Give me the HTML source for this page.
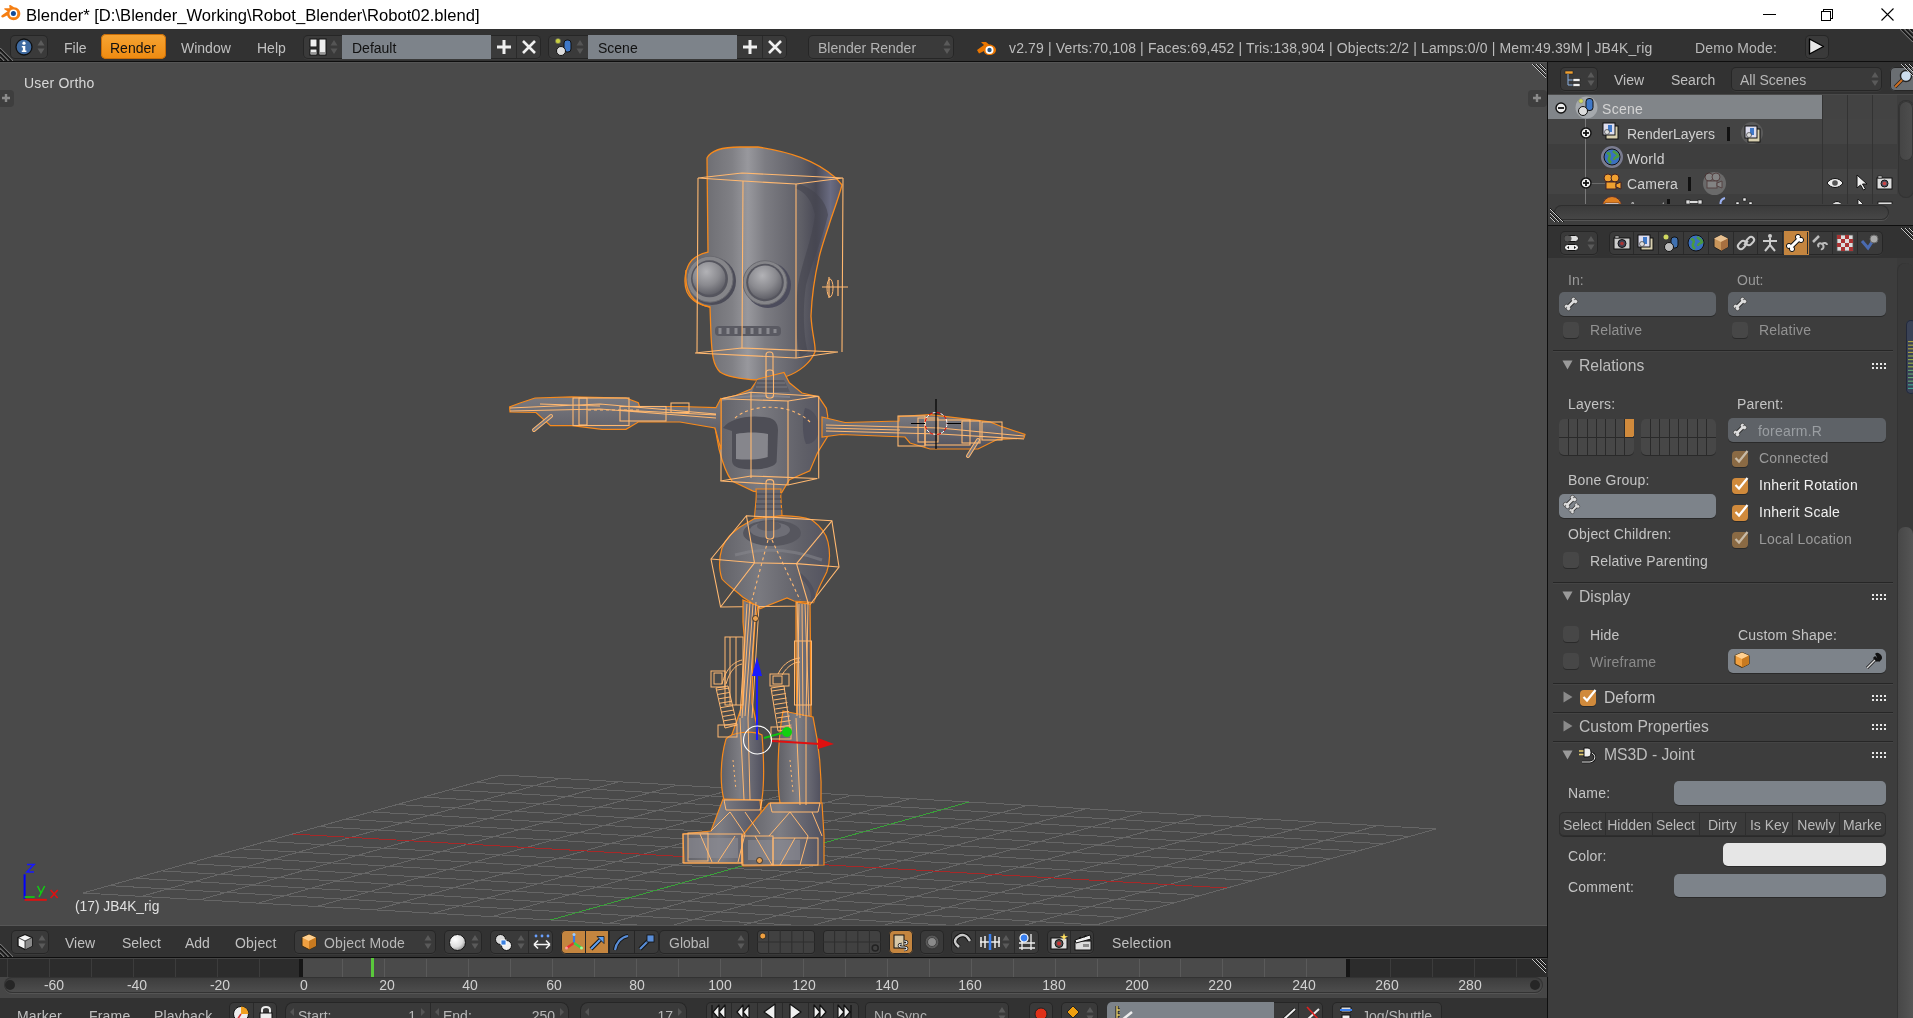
<!DOCTYPE html>
<html><head><meta charset="utf-8">
<style>
*{box-sizing:border-box;margin:0;padding:0}
html,body{width:1913px;height:1018px;overflow:hidden;background:#4a4a4a;font-family:"Liberation Sans",sans-serif;font-size:14px;color:#c8c8c8}
.a{position:absolute}
.t{position:absolute;white-space:nowrap;line-height:1;will-change:transform}
.hdr{position:absolute;background:#323232}
.box{position:absolute;background:#3a3a3a;border-radius:5px;box-shadow:inset 0 0 0 1px #2b2b2b,0 1px 0 #3c3c3c}
.fld{position:absolute;background:#7c8289;border-radius:4px}
.cb{position:absolute;width:16px;height:16px;border-radius:4px;background:#474747;box-shadow:0 1px 0 #2e2e2e}
.sep{position:absolute;height:1px;background:#232323;left:1553px;width:339px}
.grip{position:absolute;width:15px;height:7px;background-image:radial-gradient(circle at 1px 1px,#e6e6e6 1.1px,transparent 1.2px);background-size:4px 4px}
.arr{position:absolute;width:8px;height:16px}
svg{overflow:visible}
</style></head><body>

<div class="a" style="left:0;top:0;width:1913px;height:29px;background:#fff"></div>
<svg class="a" style="left:0;top:0" width="24" height="24" viewBox="0 0 24 24">
 <path d="M1.3 16.6 C1 16 1.5 15.4 2.2 14.9 L7.6 11.2 L4.6 9.6 C3.8 9 4.2 8.3 5.2 8.3 L9.6 8.3 L9.2 5.6 C9.2 4.8 10 4.7 10.8 5.2 L14 7.2 C17.8 7.4 20.3 10.2 20.3 13.5 C20.3 17.3 17.3 20.2 13.5 20.2 C10.3 20.2 7.8 18.2 7.1 15.6 L3 17.5 C2.2 17.8 1.6 17.3 1.3 16.6 Z" fill="#f57e12"/>
 <circle cx="13.4" cy="13.4" r="3.9" fill="#fff"/><circle cx="13.4" cy="13.4" r="2.5" fill="#124a9a"/>
</svg>
<div class="t" style="left:26px;top:7.5px;font-size:16.6px;color:#000">Blender* [D:\Blender_Working\Robot_Blender\Robot02.blend]</div>
<div class="a" style="left:1763px;top:14px;width:13px;height:1px;background:#000"></div>
<div class="a" style="left:1823px;top:9px;width:10px;height:10px;border:1px solid #000;background:#fff"></div>
<div class="a" style="left:1821px;top:11px;width:10px;height:10px;border:1px solid #000;background:#fff"></div>
<svg class="a" style="left:1881px;top:8px" width="13" height="13"><path d="M0.5 0.5L12.5 12.5M12.5 0.5L0.5 12.5" stroke="#000" stroke-width="1.1"/></svg>

<div class="a" style="left:0px;top:29px;width:1913px;height:32px;background:#323232;"></div>
<div class="a" style="left:0px;top:61px;width:1913px;height:1px;background:#0e0e0e;"></div>
<div class="a" style="left:10px;top:35px;width:38px;height:24px;background:#3a3a3a;border-radius:5px;box-shadow:inset 0 0 0 1px #262626,0 1px 0 rgba(255,255,255,0.04);"></div>
<svg class="a" style="left:15px;top:38px;" width="18" height="18" viewBox="0 0 18 18"><circle cx="9" cy="9" r="8" fill="#3f6aa0" stroke="#111" stroke-width="1.3"/><circle cx="9" cy="5.2" r="1.6" fill="#fff"/><path d="M6.8 8 H10.3 V12.6 H11.4 V14 H6.8 V12.6 H7.9 V9.4 H6.8Z" fill="#fff"/></svg>
<svg class="a" style="left:37px;top:39px;" width="8" height="16" viewBox="0 0 8 16"><path d="M0.5 6.5 L4 1 L7.5 6.5Z M0.5 9.5 L4 15 L7.5 9.5Z" fill="#5c5c5c"/></svg>
<div class="t" style="left:64px;top:41.15px;font-size:14px;color:#c0c0c0;">File</div>
<div class="a" style="left:101px;top:34px;width:65px;height:25px;border-radius:5px;background:linear-gradient(#f7a534,#ee8a10);box-shadow:inset 0 0 0 1px #c86d08"></div>
<div class="t" style="left:110px;top:41.15px;font-size:14px;color:#111;">Render</div>
<div class="t" style="left:181px;top:41.15px;font-size:14px;color:#c0c0c0;">Window</div>
<div class="t" style="left:256.5px;top:41.15px;font-size:14px;color:#c0c0c0;">Help</div>
<div class="a" style="left:303px;top:35px;width:238px;height:24px;background:#3a3a3a;border-radius:5px;box-shadow:inset 0 0 0 1px #262626,0 1px 0 rgba(255,255,255,0.04);"></div>
<div class="a" style="left:342px;top:35px;width:149px;height:24px;background:#7d838a;"></div>
<svg class="a" style="left:309px;top:38px;" width="18" height="18" viewBox="0 0 18 18"><rect x="1" y="1" width="7" height="8" fill="#eee" stroke="#111"/><rect x="1" y="11" width="7" height="6" fill="#eee" stroke="#111"/><rect x="10" y="1" width="7" height="16" fill="#eee" stroke="#111"/><rect x="2" y="14" width="5" height="2" fill="#999"/><rect x="11" y="14" width="5" height="2" fill="#999"/></svg>
<svg class="a" style="left:330px;top:39px;" width="8" height="16" viewBox="0 0 8 16"><path d="M0.5 6.5 L4 1 L7.5 6.5Z M0.5 9.5 L4 15 L7.5 9.5Z" fill="#555"/></svg>
<div class="t" style="left:351.5px;top:41.15px;font-size:14px;color:#111;">Default</div>
<div class="a" style="left:516px;top:36px;width:1px;height:22px;background:#2a2a2a;"></div>
<svg class="a" style="left:496px;top:39px;" width="16" height="16" viewBox="0 0 16 16"><path d="M8 1V15M1 8H15" stroke="#f0f0f0" stroke-width="3"/></svg>
<svg class="a" style="left:521px;top:39px;" width="16" height="16" viewBox="0 0 16 16"><path d="M2 2L14 14M14 2L2 14" stroke="#f0f0f0" stroke-width="2.6"/></svg>
<div class="a" style="left:548px;top:35px;width:239px;height:24px;background:#3a3a3a;border-radius:5px;box-shadow:inset 0 0 0 1px #262626,0 1px 0 rgba(255,255,255,0.04);"></div>
<div class="a" style="left:588px;top:35px;width:149px;height:24px;background:#7d838a;"></div>
<svg class="a" style="left:553px;top:37px;" width="22" height="20" viewBox="0 0 22 20"><circle cx="5" cy="4" r="2.6" fill="#c8d040" stroke="#665" stroke-width=".6"/><rect x="11" y="3" width="7" height="12" rx="3" fill="#3f78c8" stroke="#111" stroke-width="1"/><circle cx="8" cy="14" r="4.5" fill="#ddd" stroke="#111" stroke-width="1"/></svg>
<svg class="a" style="left:576px;top:39px;" width="8" height="16" viewBox="0 0 8 16"><path d="M0.5 6.5 L4 1 L7.5 6.5Z M0.5 9.5 L4 15 L7.5 9.5Z" fill="#555"/></svg>
<div class="t" style="left:597.5px;top:41.15px;font-size:14px;color:#111;">Scene</div>
<div class="a" style="left:762px;top:36px;width:1px;height:22px;background:#2a2a2a;"></div>
<svg class="a" style="left:742px;top:39px;" width="16" height="16" viewBox="0 0 16 16"><path d="M8 1V15M1 8H15" stroke="#f0f0f0" stroke-width="3"/></svg>
<svg class="a" style="left:767px;top:39px;" width="16" height="16" viewBox="0 0 16 16"><path d="M2 2L14 14M14 2L2 14" stroke="#f0f0f0" stroke-width="2.6"/></svg>
<div class="a" style="left:808px;top:35px;width:146px;height:24px;background:#3a3a3a;border-radius:5px;box-shadow:inset 0 0 0 1px #262626,0 1px 0 rgba(255,255,255,0.04);"></div>
<div class="t" style="left:817.5px;top:41.15px;font-size:14px;color:#b4b4b4;">Blender Render</div>
<svg class="a" style="left:943px;top:39px;" width="8" height="16" viewBox="0 0 8 16"><path d="M0.5 6.5 L4 1 L7.5 6.5Z M0.5 9.5 L4 15 L7.5 9.5Z" fill="#5a5a5a"/></svg>
<svg class="a" style="left:976px;top:37px;" width="22" height="20" viewBox="0 0 22 20"><path d="M1 13 L8 8 L5 5 L10 5 L13 7.5 C17 7.5 20 10 20 13 C20 16 17 18 13.5 18 C10 18 8 16 8 14 L3 16.5 Z" fill="#ea7600"/><circle cx="13.5" cy="13" r="4" fill="#fff"/><circle cx="13.5" cy="13" r="2.2" fill="#265787"/></svg>
<div class="t" style="left:1009px;top:41.15px;font-size:14px;color:#bdbdbd;letter-spacing:0.14px">v2.79 | Verts:70,108 | Faces:69,452 | Tris:138,904 | Objects:2/2 | Lamps:0/0 | Mem:49.39M | JB4K_rig</div>
<div class="t" style="left:1694.5px;top:41.15px;font-size:14px;color:#b8b8b8;letter-spacing:0.2px">Demo Mode:</div>
<div class="a" style="left:1805px;top:35px;width:24px;height:24px;background:#3a3a3a;border-radius:5px;box-shadow:inset 0 0 0 1px #262626,0 1px 0 rgba(255,255,255,0.04);"></div>
<svg class="a" style="left:1808px;top:38px;" width="18" height="18" viewBox="0 0 18 18"><path d="M1.5 1 L15.5 8.5 L1.5 16Z" fill="#e8e8e8" stroke="#000" stroke-width="1.4" stroke-linejoin="round"/></svg>
<svg class="a" style="left:0px;top:48px;overflow:hidden" width="13" height="13" viewBox="0 0 13 13"><path d="M0 0.0 L13.0 13" stroke="#7a7a7a" stroke-width="1.1"/><path d="M0 1.5 L11.5 13" stroke="#111" stroke-width="1.1"/><path d="M0 4.5 L8.5 13" stroke="#7a7a7a" stroke-width="1.1"/><path d="M0 6.0 L7.0 13" stroke="#111" stroke-width="1.1"/><path d="M0 9.0 L4.0 13" stroke="#7a7a7a" stroke-width="1.1"/><path d="M0 10.5 L2.5 13" stroke="#111" stroke-width="1.1"/></svg>
<svg class="a" style="left:1900px;top:29px;overflow:hidden" width="13" height="13" viewBox="0 0 13 13"><path d="M0 0L13 13M4.5 0L13 8.5M9 0L13 4" stroke="#7a7a7a" stroke-width="1.1"/><path d="M1.5 0L13 11.5M6 0L13 7M10.5 0L13 2.5" stroke="#111" stroke-width="1.1"/></svg>
<div class="a" style="left:0px;top:62px;width:1547px;height:864px;background:#4a4a4a;"></div>
<div class="a" style="left:1547px;top:62px;width:1px;height:956px;background:#0e0e0e;"></div>
<div class="t" style="left:24.3px;top:76.15px;font-size:14px;color:#d8d8d8;letter-spacing:0.2px">User Ortho</div>
<div class="a" style="left:-4px;top:90px;width:18px;height:17px;border-radius:4px;background:#3e3e3e"></div>
<svg class="a" style="left:1px;top:93px;" width="10" height="10" viewBox="0 0 10 10"><path d="M5 1V9M1 5H9" stroke="#8a8a8a" stroke-width="2.4"/></svg>
<div class="a" style="left:1528px;top:90px;width:19px;height:17px;border-radius:4px;background:#3e3e3e"></div>
<svg class="a" style="left:1532px;top:93px;" width="10" height="10" viewBox="0 0 10 10"><path d="M5 1V9M1 5H9" stroke="#8a8a8a" stroke-width="2.4"/></svg>
<svg class="a" style="left:1530px;top:63px;" width="17" height="17" viewBox="0 0 17 17"><path d="M2 1L16 15M6 1L16 11M10 1L16 7" stroke="#c8c8c8" stroke-width="1"/><path d="M3 1L16 14M7 1L16 10M11 1L16 6" stroke="#111" stroke-width="1"/></svg>
<svg class="a" style="left:0;top:62px;overflow:hidden" width="1547" height="864" viewBox="0 62 1547 864" stroke-width="1" fill="none" shape-rendering="crispEdges"><path d="M83.0 893.0L502.0 775.0" stroke="#666666"/><path d="M83.0 893.0L1018.0 947.0" stroke="#666666"/><path d="M141.4 896.4L560.4 778.4" stroke="#666666"/><path d="M109.2 885.6L1044.1 939.6" stroke="#666666"/><path d="M199.9 899.8L618.8 781.8" stroke="#666666"/><path d="M135.4 878.2L1070.2 932.2" stroke="#666666"/><path d="M258.3 903.1L677.1 785.1" stroke="#666666"/><path d="M161.6 870.9L1096.4 924.9" stroke="#666666"/><path d="M316.8 906.5L735.5 788.5" stroke="#666666"/><path d="M187.8 863.5L1122.5 917.5" stroke="#666666"/><path d="M375.2 909.9L793.9 791.9" stroke="#666666"/><path d="M213.9 856.1L1148.6 910.1" stroke="#666666"/><path d="M433.6 913.2L852.2 795.2" stroke="#666666"/><path d="M240.1 848.8L1174.8 902.8" stroke="#666666"/><path d="M492.1 916.6L910.6 798.6" stroke="#666666"/><path d="M266.3 841.4L1200.9 895.4" stroke="#666666"/><path d="M608.9 923.4L1027.4 805.4" stroke="#666666"/><path d="M318.7 826.6L1253.1 880.6" stroke="#666666"/><path d="M667.4 926.8L1085.8 808.8" stroke="#666666"/><path d="M344.9 819.2L1279.2 873.2" stroke="#666666"/><path d="M725.8 930.1L1144.1 812.1" stroke="#666666"/><path d="M371.1 811.9L1305.4 865.9" stroke="#666666"/><path d="M784.2 933.5L1202.5 815.5" stroke="#666666"/><path d="M397.2 804.5L1331.5 858.5" stroke="#666666"/><path d="M842.7 936.9L1260.9 818.9" stroke="#666666"/><path d="M423.4 797.1L1357.6 851.1" stroke="#666666"/><path d="M901.1 940.2L1319.2 822.2" stroke="#666666"/><path d="M449.6 789.8L1383.8 843.8" stroke="#666666"/><path d="M959.6 943.6L1377.6 825.6" stroke="#666666"/><path d="M475.8 782.4L1409.9 836.4" stroke="#666666"/><path d="M1018.0 947.0L1436.0 829.0" stroke="#666666"/><path d="M502.0 775.0L1436.0 829.0" stroke="#666666"/><path d="M292.5 834.0L1227.0 888.0" stroke="#a82828" stroke-width="1"/><path d="M550.5 920.0L969.0 802.0" stroke="#3aa03a" stroke-width="1"/></svg>
<svg class="a" style="left:20px;top:860px;" width="45" height="45" viewBox="0 0 45 45"><path d="M4.6 14.3V39" stroke="#0000ff" stroke-width="2"/><path d="M4.6 39.8H26.8" stroke="#e01010" stroke-width="2"/><path d="M4.6 37H14.7" stroke="#10d010" stroke-width="1.6"/><path d="M7 4.5H14L7 12H14" stroke="#1818ff" stroke-width="1.6" fill="none"/><path d="M17.6 26L21 33M24.7 26L19 37" stroke="#10d010" stroke-width="1.5" fill="none"/><path d="M30.6 30L37.7 38M37.7 30L30.6 38" stroke="#e01010" stroke-width="1.6" fill="none"/></svg>
<div class="t" style="left:74.8px;top:900.32px;font-size:13.8px;color:#e0e0e0;">(17) JB4K_rig</div>
<div class="a" style="left:0px;top:62px;width:1547px;height:1px;background:#555555;"></div>
<div class="a" style="left:0px;top:925px;width:1547px;height:1px;background:#565656;"></div>
<svg class="a" style="left:0;top:62px;overflow:hidden" width="1547" height="864" viewBox="0 62 1547 864"><defs>
<linearGradient id="gHead" x1="700" y1="0" x2="845" y2="0" gradientUnits="userSpaceOnUse">
 <stop offset="0" stop-color="#6a6a6f"/><stop offset="0.22" stop-color="#808085"/><stop offset="0.33" stop-color="#98989d"/><stop offset="0.45" stop-color="#7c7c82"/>
 <stop offset="0.7" stop-color="#5e5e66"/><stop offset="0.8" stop-color="#4a4a56"/><stop offset="0.9" stop-color="#6a6c82"/><stop offset="1" stop-color="#50505e"/></linearGradient>
<linearGradient id="gBody" x1="715" y1="0" x2="840" y2="0" gradientUnits="userSpaceOnUse">
 <stop offset="0" stop-color="#606066"/><stop offset="0.35" stop-color="#7a7a80"/><stop offset="0.7" stop-color="#606068"/><stop offset="1" stop-color="#4e4e5c"/></linearGradient>
<linearGradient id="gLimb" x1="0" y1="0" x2="1" y2="0">
 <stop offset="0" stop-color="#606066"/><stop offset="0.45" stop-color="#7e7e84"/><stop offset="1" stop-color="#50505e"/></linearGradient>
<linearGradient id="gArm" x1="0" y1="0" x2="0" y2="1">
 <stop offset="0" stop-color="#7a7a80"/><stop offset="0.5" stop-color="#66666e"/><stop offset="1" stop-color="#50505c"/></linearGradient>
<radialGradient id="gEye" cx="0.42" cy="0.3" r="0.75">
 <stop offset="0" stop-color="#b2b2b6"/><stop offset="0.55" stop-color="#8a8a8f"/><stop offset="1" stop-color="#5a5a62"/></radialGradient>
<radialGradient id="gRing" cx="0.45" cy="0.4" r="0.65">
 <stop offset="0.6" stop-color="#606066"/><stop offset="0.85" stop-color="#7c7c82"/><stop offset="1" stop-color="#50505a"/></radialGradient>
</defs><path d="M707 158 C710 152 720 147 740 147 L758 147 C790 152 815 160 836 178 L842 185 C838 200 832 215 829 225 C824 240 820 252 819 258 C815 275 812 290 811 316 C812 335 816 345 815 352 C811 362 800 372 785 377 L783 393 L757 393 L758 380 C740 379 727 377 720 372 C713 365 712 355 711 335 L710 307 C700 305 692 302 687 292 C683 282 685 268 692 260 C698 254 704 253 708 252 Z" fill="url(#gHead)" stroke="#f78a1c" stroke-width="1.3"/><path d="M800 184 C815 190 826 200 828 215 C822 240 812 262 806 285 C802 310 804 340 808 352 L800 358 C796 340 795 310 798 285 C802 262 812 240 815 215 C812 200 805 192 795 188Z" fill="#44444e" opacity="0.6"/><path d="M822 287 H848 M829 277 V298 M838 280 V296" stroke="#ffb870" stroke-width="1.2" fill="none"/><ellipse cx="830" cy="288" rx="3" ry="9" fill="none" stroke="#ffb870" stroke-width="1"/><circle cx="712" cy="281" r="24" fill="#4c4c58"/><circle cx="710" cy="279.2" r="23" fill="#858589" stroke="#6a6a70" stroke-width="1"/><circle cx="709.5" cy="278.8" r="18.5" fill="#55555e"/><circle cx="709" cy="278.3" r="16.4" fill="url(#gEye)"/><circle cx="768" cy="285" r="23" fill="#4c4c5c"/><circle cx="765" cy="282.7" r="22" fill="#858589" stroke="#6a6a70" stroke-width="1"/><circle cx="765" cy="282.5" r="18.8" fill="#55555e"/><circle cx="765" cy="282.3" r="16.8" fill="url(#gEye)"/><path d="M686 270 C684 290 692 304 710 307" fill="none" stroke="#f78a1c" stroke-width="1.3"/><rect x="715" y="326" width="66" height="10" rx="4" fill="#5a5a62"/><path d="M720 328V334M728 328V334M736 328V334M744 328V334M752 328V334M760 328V334M768 328V334M775 329V333" stroke="#8a8a90" stroke-width="3"/><g fill="none" stroke="#ffb870" stroke-width="1.1"><path d="M698 178 L742 173 L843 178 L796 184 L743 181 Z"/><path d="M698 178 L697 353 M743 181 L742 348 M796 184 L796 358 M843 178 L842 352"/><path d="M695 353 L742 348 L838 352 L796 358 Z"/></g><rect x="766" y="352" width="7" height="26" rx="3" fill="none" stroke="#ffb870" stroke-width="1.1"/><path d="M758 379 L751 389 L735.7 395.5 L721.7 398.7 L719 408 L715 412 L715 427.5 L719 449 C723 465 727 475 732 481 L753.6 491.3 L781.7 492.6 L789.4 479.8 L809.8 470.9 L817.4 453 L827.7 436.4 L827.7 416 L826.4 408.3 L818.7 396.8 L802 393 L789.4 382.8 L784 372.5 Z" fill="url(#gBody)" stroke="#f78a1c" stroke-width="1.2"/><path d="M757 380 H784 L790 392 H752Z" fill="#5a5a62"/><path d="M757 383 H785 M756 387 H787" stroke="#7a7a80" stroke-width="1"/><path d="M723 428 C730 418 750 414 770 418 C776 420 778 425 778 430 L776.6 462 C774 468 760 470 745 469 C735 468 732 465 732 460 L732 431 Z" fill="#4e4e56"/><path d="M736 434 C745 432 760 432 768 434 L767.7 457 C760 460 745 460 736 459Z" fill="#86868c"/><path d="M805 408 C815 410 819 420 819 428 C819 436 815 444 806 444 C802 436 802 416 805 408Z" fill="#50505c"/><path d="M722 400 C740 396 760 395 790 397" stroke="#90909a" stroke-width="2" fill="none" opacity="0.6"/><g fill="none" stroke="#ffb870" stroke-width="1.1"><path d="M721 398.7 L751 392.3 L818.7 396.2 L788 401 Z"/><path d="M721 398.7 V481 M751 392.3 V478 M788 401 V485 M818.7 396.2 V478.5"/><path d="M720.4 481 L751 476 L817.4 478.5 L788 485 Z"/><path d="M735 418 C750 404 790 402 810 422" stroke-dasharray="3 3"/><rect x="766" y="370" width="7.5" height="28" rx="3"/></g><path d="M756 489 H781 C780 497 782 508 782 517 H754.5 C755 508 757 497 756 489Z" fill="#66666e" stroke="#f78a1c" stroke-width="1.1"/><path d="M757 494H781M757 499H781M756 504H782M756 509H782" stroke="#50505a" stroke-width="1.5"/><path d="M754.5 518.6 L781.8 515.7 C795 516 806 518 812 520 C820 526 826 532 828 542 C831 556 829 566 826.7 572 C823 580 818 588 816 596 L813.5 602.6 L794 601 L787 598 L760.4 608.5 L742.7 597 C735 590 726 584 722 579 C719 570 719 558 722 548 C726 538 732 533 740 527 Z" fill="url(#gBody)" stroke="#f78a1c" stroke-width="1.2"/><ellipse cx="772" cy="533" rx="29" ry="13" fill="#56565e"/><ellipse cx="770" cy="530" rx="20" ry="8" fill="#6e6e76"/><ellipse cx="769" cy="526" rx="12" ry="5" fill="#5c5c64"/><path d="M735 555 C760 548 790 548 822 560" stroke="#8a8a90" stroke-width="3" fill="none" opacity="0.5"/><path d="M800 575 C812 585 815 595 812 602" stroke="#4a4a58" stroke-width="4" fill="none" opacity="0.6"/><g fill="none" stroke="#ffb870" stroke-width="1.1"><path d="M711 559 L746.4 515.7 L831.9 520.8 L839 567 L809 606 L720.6 607 Z"/><path d="M711 559 L754.5 562.8 L796.5 563.6 L839 567 M746.4 515.7 L754.5 562.8 M831.9 520.8 L796.5 563.6 M754.5 562.8 L720.6 607 M796.5 563.6 L809 606"/><path d="M768 540 L752 600 M772 540 L800 600" stroke-dasharray="3 3"/><rect x="766" y="479.6" width="7.7" height="59.4" rx="3"/></g><path d="M743 600 L758 606 L755 623 L753 654 L752 703 L760 740 L730 740 L742 706 L744.7 641 L743 622Z" fill="url(#gLimb)" stroke="#f78a1c" stroke-width="1.3"/><path d="M796 602 L810 604 L811 717 L814 740 L784 740 L797 717 L796 660Z" fill="url(#gLimb)" stroke="#f78a1c" stroke-width="1.3"/><path d="M726 739 C732 732 752 730 762 735 C764 760 764 785 762 799 L760 815 C748 818 735 815 724 800 C720 785 720 760 726 739Z" fill="url(#gLimb)" stroke="#f78a1c" stroke-width="1.2"/><path d="M783 711 L813 717 C819 745 822 775 821 803 L818 815 C805 818 790 815 780 803 C777 785 777 745 783 711Z" fill="url(#gLimb)" stroke="#f78a1c" stroke-width="1.2"/><path d="M723 799 L760 800 L763 834 L742 840 L742 863 L684 863 L683 834 L711 831Z" fill="url(#gLimb)" stroke="#f78a1c" stroke-width="1.2"/><path d="M769 803 L822 803 L824 836 L824 865 L743 866 L742 836Z" fill="url(#gLimb)" stroke="#f78a1c" stroke-width="1.2"/><path d="M688 838 H738 V858 H688Z" fill="#8c8c94" opacity="0.6"/><path d="M748 840 H800 V860 H748Z" fill="#8c8c94" opacity="0.6"/><g fill="none" stroke="#ffb870" stroke-width="1"><path d="M750 602 L742 718 M756 602 L748 718 M753 604 L745 716 M747 604 L740 716 M759 606 L752 718"/><path d="M797 602 L800 718 M808 602 L806 718 M802 604 L803 716 M799 604 L797 716 M805 604 L809 716"/><rect x="725" y="637" width="18" height="68"/><path d="M730 637V705 M736 637V705"/><rect x="794.5" y="641" width="17" height="64"/><rect x="711" y="671" width="14" height="16"/><rect x="714" y="673" width="8" height="11"/><path d="M716 688 L728 686 L737 725 L725 728 Z M726 684 C730 670 736 665 742 664 M722 684 C726 668 734 662 742 660"/><path d="M717.0 690.0 L729.0 688.0"/><path d="M718.0 694.4 L730.0 692.4"/><path d="M719.0 698.8 L731.0 696.8"/><path d="M720.0 703.2 L732.0 701.2"/><path d="M721.0 707.6 L733.0 705.6"/><path d="M722.0 712.0 L734.0 710.0"/><path d="M723.0 716.4 L735.0 714.4"/><path d="M724.0 720.8 L736.0 718.8"/><path d="M725.0 725.2 L737.0 723.2"/><rect x="770" y="674" width="19" height="12"/><rect x="773" y="676" width="9" height="8"/><path d="M771 688 L784 686 L790 729 L778 731 Z M782 675 C788 665 795 662 800 662 M778 674 C784 662 792 659 800 658"/><path d="M772.0 691.0 L785.0 689.0"/><path d="M772.8 695.5 L785.8 693.5"/><path d="M773.6 700.0 L786.6 698.0"/><path d="M774.4 704.5 L787.4 702.5"/><path d="M775.2 709.0 L788.2 707.0"/><path d="M776.0 713.5 L789.0 711.5"/><path d="M776.8 718.0 L789.8 716.0"/><path d="M777.6 722.5 L790.6 720.5"/><path d="M778.4 727.0 L791.4 725.0"/><rect x="718" y="725" width="19" height="12"/><rect x="771" y="727" width="20" height="12"/><path d="M740 718 L744 800 M748 718 L750 800 M796 718 L800 805 M806 718 L806 805"/><path d="M733 760 L736 790 M790 760 L793 792" stroke-dasharray="2 3"/><path d="M724 800 H762 L760 810 H726Z M770 803 H820 L818 812 H772Z"/><path d="M711 831 L730 812 L745 834 L738 862 M718 862 L735 836 M700 834 L712 862 M745 812 L760 834"/><path d="M769 836 L790 812 L808 836 L800 865 M780 865 L795 838 M755 836 L772 865 M812 812 L822 836"/><rect x="683" y="834" width="59" height="29"/><rect x="688" y="833" width="20" height="28"/><rect x="742" y="836" width="31" height="29"/><rect x="773" y="838" width="45" height="27"/></g><path d="M721 398 L716 407.7 L680 406.5 L639.5 406.5 L638.3 402.8 L626 398 L572 396.8 L535 398 L520 403 L509.6 407 L510 412 L536 412.5 L550.5 425.7 L572 425.7 L602 429.3 L626 429.3 L638.3 422 L680 422 L715 428 L721 449.7 Z" fill="url(#gArm)" stroke="#f78a1c" stroke-width="1.2"/><path d="M534 430 L551 416" stroke="#ffb870" stroke-width="4" stroke-linecap="round"/><path d="M534 430 L551 416" stroke="#7a7a80" stroke-width="2" stroke-linecap="round"/><g fill="none" stroke="#ffb870" stroke-width="1.1"><rect x="573" y="398" width="56" height="27.5"/><rect x="579" y="398" width="8" height="27"/><rect x="620" y="406.5" width="46" height="14.5"/><path d="M510 408 L600 404 L716 414 M510 411 L600 409 L716 418 M620 410 L716 415 M540 404 L600 406" /><rect x="671" y="403" width="18" height="9.5"/><path d="M588 410 H640" stroke-dasharray="3 3"/></g><path d="M822 417 L845 422.5 L899 421 L899 416.5 L930 414.6 L990 421.9 L1000 426 L1025 434.5 L1024 438 L997.6 439.3 L978 449 L930 449 L910 443 L905 437 L841 434.5 L822 437 Z" fill="url(#gArm)" stroke="#f78a1c" stroke-width="1.2"/><path d="M968 456 L978 440" stroke="#ffb870" stroke-width="4" stroke-linecap="round"/><path d="M968 456 L978 440" stroke="#7a7a80" stroke-width="2" stroke-linecap="round"/><g fill="none" stroke="#ffb870" stroke-width="1.1"><path d="M826 425 L940 428 L1024 436 M826 431 L940 434 L1024 439 M826 428 L900 430"/><rect x="898" y="416" width="27" height="30"/><rect x="918" y="418" width="20" height="24"/><rect x="925" y="420" width="45" height="25"/><rect x="962" y="421" width="18" height="22"/><rect x="982" y="422" width="20" height="18"/></g><circle cx="936" cy="423.5" r="11" fill="none" stroke="#fff" stroke-width="1" stroke-dasharray="4 4"/><circle cx="936" cy="423.5" r="11" fill="none" stroke="#e00" stroke-width="1" stroke-dasharray="4 4" stroke-dashoffset="4"/><path d="M936 399 V449 M911 423.5 H925 M947 423.5 H961" stroke="#000" stroke-width="1.2"/><path d="M757 740 V670" stroke="#1a1aff" stroke-width="2"/><path d="M752 676 L757 657 L762 676Z" fill="#1a1aff"/><path d="M772 741 L820 744" stroke="#e01010" stroke-width="2"/><path d="M818 738 L834 744 L818 749Z" fill="#e01010"/><path d="M764 738 L782 733" stroke="#10c010" stroke-width="2"/><circle cx="787" cy="732" r="5" fill="#10d010"/><circle cx="757.5" cy="740" r="14" fill="none" stroke="#fff" stroke-width="1.1"/><circle cx="755.5" cy="618.5" r="3" fill="#e8a050" stroke="#222" stroke-width="0.8"/><circle cx="759.5" cy="860.5" r="3" fill="#e8a050" stroke="#222" stroke-width="0.8"/></svg>
<div class="a" style="left:0px;top:926px;width:1547px;height:31px;background:#323232;"></div>
<div class="a" style="left:0px;top:957px;width:1547px;height:1px;background:#0e0e0e;"></div>
<svg class="a" style="left:0px;top:944px;overflow:hidden" width="13" height="13" viewBox="0 0 13 13"><path d="M0 0.0 L13.0 13" stroke="#7a7a7a" stroke-width="1.1"/><path d="M0 1.5 L11.5 13" stroke="#111" stroke-width="1.1"/><path d="M0 4.5 L8.5 13" stroke="#7a7a7a" stroke-width="1.1"/><path d="M0 6.0 L7.0 13" stroke="#111" stroke-width="1.1"/><path d="M0 9.0 L4.0 13" stroke="#7a7a7a" stroke-width="1.1"/><path d="M0 10.5 L2.5 13" stroke="#111" stroke-width="1.1"/></svg>
<div class="a" style="left:11px;top:930px;width:38px;height:24px;background:#3a3a3a;border-radius:5px;box-shadow:inset 0 0 0 1px #262626,0 1px 0 rgba(255,255,255,0.04);"></div>
<svg class="a" style="left:16px;top:933px;" width="18" height="18" viewBox="0 0 18 18"><path d="M9 1.5 L16 4.5 V13 L9 16.5 L2 13 V4.5Z" fill="#f4f4f4" stroke="#111" stroke-width="1.3" stroke-linejoin="round"/><path d="M9 8 L16 4.5 V13 L9 16.5Z" fill="#8a8a8a"/><path d="M2 4.5 L9 8 L16 4.5 M9 8V16.5" stroke="#111" stroke-width="0.8" fill="none"/></svg>
<svg class="a" style="left:38px;top:934px;" width="8" height="16" viewBox="0 0 8 16"><path d="M0.5 6.5 L4 1 L7.5 6.5Z M0.5 9.5 L4 15 L7.5 9.5Z" fill="#5a5a5a"/></svg>
<div class="t" style="left:65px;top:936.15px;font-size:14px;color:#c0c0c0;">View</div>
<div class="t" style="left:121.5px;top:936.15px;font-size:14px;color:#c0c0c0;">Select</div>
<div class="t" style="left:185px;top:936.15px;font-size:14px;color:#c0c0c0;">Add</div>
<div class="t" style="left:235px;top:936.15px;font-size:14px;color:#c0c0c0;letter-spacing:0.2px">Object</div>
<div class="a" style="left:294px;top:930px;width:142px;height:24px;background:#3a3a3a;border-radius:5px;box-shadow:inset 0 0 0 1px #262626,0 1px 0 rgba(255,255,255,0.04);"></div>
<svg class="a" style="left:300px;top:933px;" width="18" height="18" viewBox="0 0 18 18"><path d="M9 1.5 L16 4.5 V13 L9 16.5 L2 13 V4.5Z" fill="#f0a040" stroke="#3a2a10" stroke-width="1" stroke-linejoin="round"/><path d="M2 4.5 L9 8 L16 4.5 L9 1.5Z" fill="#ffd090"/><path d="M9 8 L16 4.5 V13 L9 16.5Z" fill="#c87a20"/></svg>
<div class="t" style="left:323.5px;top:936.15px;font-size:14px;color:#b8b8b8;letter-spacing:0.15px">Object Mode</div>
<svg class="a" style="left:424px;top:934px;" width="8" height="16" viewBox="0 0 8 16"><path d="M0.5 6.5 L4 1 L7.5 6.5Z M0.5 9.5 L4 15 L7.5 9.5Z" fill="#5a5a5a"/></svg>
<div class="a" style="left:444px;top:930px;width:38px;height:24px;background:#3a3a3a;border-radius:5px;box-shadow:inset 0 0 0 1px #262626,0 1px 0 rgba(255,255,255,0.04);"></div>
<svg class="a" style="left:449px;top:934px;" width="17" height="17" viewBox="0 0 17 17"><defs><radialGradient id="sph" cx="0.35" cy="0.3" r="0.8"><stop offset="0" stop-color="#fff"/><stop offset="0.6" stop-color="#ddd"/><stop offset="1" stop-color="#888"/></radialGradient></defs><circle cx="8.5" cy="8.5" r="8" fill="url(#sph)" stroke="#111" stroke-width="1"/></svg>
<svg class="a" style="left:471px;top:934px;" width="8" height="16" viewBox="0 0 8 16"><path d="M0.5 6.5 L4 1 L7.5 6.5Z M0.5 9.5 L4 15 L7.5 9.5Z" fill="#5a5a5a"/></svg>
<div class="a" style="left:490px;top:930px;width:63px;height:24px;background:#3a3a3a;border-radius:5px;box-shadow:inset 0 0 0 1px #262626,0 1px 0 rgba(255,255,255,0.04);"></div>
<div class="a" style="left:528px;top:931px;width:1px;height:22px;background:#2a2a2a;"></div>
<svg class="a" style="left:494px;top:933px;" width="20" height="20" viewBox="0 0 20 20"><circle cx="6.5" cy="6.5" r="5" fill="#ddd" stroke="#111"/><circle cx="12.5" cy="12.5" r="5" fill="#eee" stroke="#111"/><rect x="7" y="7" width="5" height="5" fill="#3a80e0" stroke="#fff" stroke-width="0.8"/></svg>
<svg class="a" style="left:517px;top:934px;" width="8" height="16" viewBox="0 0 8 16"><path d="M0.5 6.5 L4 1 L7.5 6.5Z M0.5 9.5 L4 15 L7.5 9.5Z" fill="#5a5a5a"/></svg>
<svg class="a" style="left:532px;top:933px;" width="20" height="18" viewBox="0 0 20 18"><circle cx="4" cy="3" r="1.4" fill="#6aa0ff"/><circle cx="10" cy="3" r="1.4" fill="#6aa0ff"/><circle cx="16" cy="3" r="1.4" fill="#6aa0ff"/><path d="M2 11.5H18M2 11.5L6 7.5M2 11.5L6 15.5M18 11.5L14 7.5M18 11.5L14 15.5" stroke="#f4f4f4" stroke-width="1.6" fill="none"/></svg>
<div class="a" style="left:561px;top:930px;width:98px;height:24px;background:#3a3a3a;border-radius:5px;box-shadow:inset 0 0 0 1px #262626,0 1px 0 rgba(255,255,255,0.04);"></div>
<div class="a" style="left:561px;top:930px;width:48px;height:24px;background:#c4853f;border-radius:5px 0 0 5px;box-shadow:inset 0 0 0 1px #262626"></div>
<div class="a" style="left:585px;top:931px;width:1px;height:22px;background:#262626;"></div>
<div class="a" style="left:609px;top:931px;width:1px;height:22px;background:#262626;"></div>
<div class="a" style="left:634px;top:931px;width:1px;height:22px;background:#262626;"></div>
<svg class="a" style="left:564px;top:932px;" width="20" height="20" viewBox="0 0 20 20"><path d="M10 11V2" stroke="#3a7ae8" stroke-width="2.2"/><path d="M10 11L2.5 16" stroke="#e83030" stroke-width="2.2"/><path d="M10 11L17.5 16" stroke="#40d040" stroke-width="2.2"/><circle cx="10" cy="2.5" r="1.5" fill="#9cf"/><circle cx="2.5" cy="16" r="1.5" fill="#f99"/><circle cx="17.5" cy="16" r="1.5" fill="#9f9"/></svg>
<svg class="a" style="left:588px;top:933px;" width="19" height="19" viewBox="0 0 19 19"><path d="M3 16L14 5" stroke="#111" stroke-width="4"/><path d="M3 16L14 5" stroke="#60a0f0" stroke-width="2.2"/><path d="M9 3.5H16V10.5Z" fill="#60a0f0" stroke="#111" stroke-width="0.8"/></svg>
<svg class="a" style="left:612px;top:933px;" width="19" height="19" viewBox="0 0 19 19"><path d="M3 17C4 10 9 4 16 3" stroke="#111" stroke-width="4" fill="none"/><path d="M3 17C4 10 9 4 16 3" stroke="#5a8ed8" stroke-width="2.2" fill="none"/></svg>
<svg class="a" style="left:637px;top:933px;" width="19" height="19" viewBox="0 0 19 19"><path d="M3 16L11 8" stroke="#111" stroke-width="4"/><path d="M3 16L11 8" stroke="#5a8ed8" stroke-width="2.2"/><rect x="10" y="2" width="7" height="7" fill="#5a8ed8" stroke="#111" stroke-width="0.8"/></svg>
<div class="a" style="left:659px;top:930px;width:90px;height:24px;background:#3a3a3a;border-radius:5px;box-shadow:inset 0 0 0 1px #262626,0 1px 0 rgba(255,255,255,0.04);"></div>
<div class="t" style="left:669px;top:936.15px;font-size:14px;color:#b8b8b8;">Global</div>
<svg class="a" style="left:737px;top:934px;" width="8" height="16" viewBox="0 0 8 16"><path d="M0.5 6.5 L4 1 L7.5 6.5Z M0.5 9.5 L4 15 L7.5 9.5Z" fill="#5a5a5a"/></svg>
<div class="a" style="left:757px;top:930px;width:58px;height:24px;background:#414141;border-radius:4px;box-shadow:inset 0 0 0 1px #262626,0 1px 0 rgba(255,255,255,0.04);"></div>
<svg class="a" style="left:757px;top:930px;" width="58" height="24" viewBox="0 0 58 24"><path d="M11.6 0V24" stroke="#2e2e2e"/><path d="M23.2 0V24" stroke="#2e2e2e"/><path d="M34.8 0V24" stroke="#2e2e2e"/><path d="M46.4 0V24" stroke="#2e2e2e"/><path d="M0 12.0H58" stroke="#2e2e2e"/><circle cx="5.8" cy="6.0" r="3" fill="#f0a040" stroke="#222" stroke-width="0.8"/></svg>
<div class="a" style="left:823px;top:930px;width:58px;height:24px;background:#414141;border-radius:4px;box-shadow:inset 0 0 0 1px #262626,0 1px 0 rgba(255,255,255,0.04);"></div>
<svg class="a" style="left:823px;top:930px;" width="58" height="24" viewBox="0 0 58 24"><path d="M11.6 0V24" stroke="#2e2e2e"/><path d="M23.2 0V24" stroke="#2e2e2e"/><path d="M34.8 0V24" stroke="#2e2e2e"/><path d="M46.4 0V24" stroke="#2e2e2e"/><path d="M0 12.0H58" stroke="#2e2e2e"/><circle cx="52.2" cy="18.0" r="3" fill="none" stroke="#222" stroke-width="1.5"/></svg>
<div class="a" style="left:889px;top:930px;width:24px;height:24px;background:#c4853f;border-radius:5px;box-shadow:inset 0 0 0 1px #262626"></div>
<svg class="a" style="left:891px;top:932px;" width="20" height="20" viewBox="0 0 20 20"><rect x="3" y="3" width="10" height="13" fill="#d8c8a8" stroke="#111"/><path d="M13 9C17 9 17 12 13 12 M11 12 C7 12 7 15 11 15 H13 C17 15 17 18 13 18" stroke="#111" stroke-width="2.6" fill="none"/><path d="M13 9C17 9 17 12 13 12 M11 12 C7 12 7 15 11 15 H13 C17 15 17 18 13 18" stroke="#eee" stroke-width="1.2" fill="none"/></svg>
<div class="a" style="left:920px;top:930px;width:24px;height:24px;background:#3a3a3a;border-radius:5px;box-shadow:inset 0 0 0 1px #262626,0 1px 0 rgba(255,255,255,0.04);"></div>
<svg class="a" style="left:923px;top:933px;" width="18" height="18" viewBox="0 0 18 18"><circle cx="9" cy="9" r="7" fill="#5a5a5a" stroke="#333" stroke-width="1"/><circle cx="9" cy="9" r="4.5" fill="#8a8a8a" stroke="#444"/></svg>
<div class="a" style="left:951px;top:930px;width:88px;height:24px;background:#3a3a3a;border-radius:5px;box-shadow:inset 0 0 0 1px #262626,0 1px 0 rgba(255,255,255,0.04);"></div>
<div class="a" style="left:975px;top:931px;width:1px;height:22px;background:#2a2a2a;"></div>
<div class="a" style="left:1014px;top:931px;width:1px;height:22px;background:#2a2a2a;"></div>
<svg class="a" style="left:953px;top:932px;" width="20" height="20" viewBox="0 0 20 20"><path d="M6 15 L3 12 C1 10 2 6 6 4 C9 2 13 3 15 6 L17 9" stroke="#111" stroke-width="4.5" fill="none"/><path d="M6 15 L3 12 C1 10 2 6 6 4 C9 2 13 3 15 6 L17 9" stroke="#c8c8c8" stroke-width="2.5" fill="none"/></svg>
<svg class="a" style="left:978px;top:932px;" width="24" height="20" viewBox="0 0 24 20"><path d="M2 10H22" stroke="#eee" stroke-width="1.5"/><path d="M3 5V15M7 4V16M17 4V16M21 5V15" stroke="#eee" stroke-width="1.5"/><path d="M12 2V18" stroke="#3a80f0" stroke-width="2.5"/></svg>
<svg class="a" style="left:1002px;top:934px;" width="8" height="16" viewBox="0 0 8 16"><path d="M0.5 6.5 L4 1 L7.5 6.5Z M0.5 9.5 L4 15 L7.5 9.5Z" fill="#5a5a5a"/></svg>
<svg class="a" style="left:1017px;top:932px;" width="20" height="20" viewBox="0 0 20 20"><path d="M5 2V18M14 2V18M2 11H18M2 16H18" stroke="#eee" stroke-width="1.3"/><circle cx="7" cy="6" r="4" fill="#3a80f0" stroke="#fff" stroke-width="1.2"/></svg>
<div class="a" style="left:1047px;top:930px;width:47px;height:24px;background:#3a3a3a;border-radius:5px;box-shadow:inset 0 0 0 1px #262626,0 1px 0 rgba(255,255,255,0.04);"></div>
<div class="a" style="left:1070px;top:931px;width:1px;height:22px;background:#2a2a2a;"></div>
<svg class="a" style="left:1049px;top:932px;" width="20" height="20" viewBox="0 0 20 20"><rect x="2" y="6" width="16" height="11" fill="#ddd" stroke="#111"/><circle cx="10" cy="11.5" r="4" fill="#555" stroke="#111"/><circle cx="10" cy="11.5" r="2" fill="#c33"/><path d="M15 1L16 4L19 4.5L16 6L15 9L14 6L11 4.5L14 4Z" fill="#ffe060"/></svg>
<svg class="a" style="left:1073px;top:932px;" width="20" height="20" viewBox="0 0 20 20"><rect x="2" y="9" width="16" height="9" fill="#ddd" stroke="#111"/><path d="M2 8L17 3L18 7L3 11Z" fill="#eee" stroke="#111"/><path d="M6 6.5L8 5M11 5L13 3.5" stroke="#111" stroke-width="1.5"/><rect x="10" y="12" width="6" height="3" fill="#8a8a8a"/></svg>
<div class="t" style="left:1112px;top:936.15px;font-size:14px;color:#c0c0c0;letter-spacing:0.2px">Selection</div>
<div class="a" style="left:0px;top:958px;width:1547px;height:19px;background:#4a4a4a;"></div>
<div class="a" style="left:0px;top:958px;width:301px;height:19px;background:#2c2c2c;"></div>
<div class="a" style="left:1348.5px;top:958px;width:199px;height:19px;background:#2c2c2c;"></div>
<svg class="a" style="left:0;top:0" width="1547" height="1018" shape-rendering="crispEdges"><path d="M7.7 958V977" stroke="#3c3c3c" stroke-width="1"/><path d="M49.6 958V977" stroke="#3c3c3c" stroke-width="1"/><path d="M91.5 958V977" stroke="#3c3c3c" stroke-width="1"/><path d="M133.4 958V977" stroke="#3c3c3c" stroke-width="1"/><path d="M175.3 958V977" stroke="#3c3c3c" stroke-width="1"/><path d="M217.2 958V977" stroke="#3c3c3c" stroke-width="1"/><path d="M259.1 958V977" stroke="#3c3c3c" stroke-width="1"/><path d="M301.0 958V977" stroke="#5a5a5a" stroke-width="1"/><path d="M342.9 958V977" stroke="#5a5a5a" stroke-width="1"/><path d="M384.8 958V977" stroke="#5a5a5a" stroke-width="1"/><path d="M426.7 958V977" stroke="#5a5a5a" stroke-width="1"/><path d="M468.6 958V977" stroke="#5a5a5a" stroke-width="1"/><path d="M510.5 958V977" stroke="#5a5a5a" stroke-width="1"/><path d="M552.4 958V977" stroke="#5a5a5a" stroke-width="1"/><path d="M594.3 958V977" stroke="#5a5a5a" stroke-width="1"/><path d="M636.2 958V977" stroke="#5a5a5a" stroke-width="1"/><path d="M678.1 958V977" stroke="#5a5a5a" stroke-width="1"/><path d="M720.0 958V977" stroke="#5a5a5a" stroke-width="1"/><path d="M761.9 958V977" stroke="#5a5a5a" stroke-width="1"/><path d="M803.8 958V977" stroke="#5a5a5a" stroke-width="1"/><path d="M845.7 958V977" stroke="#5a5a5a" stroke-width="1"/><path d="M887.6 958V977" stroke="#5a5a5a" stroke-width="1"/><path d="M929.5 958V977" stroke="#5a5a5a" stroke-width="1"/><path d="M971.4 958V977" stroke="#5a5a5a" stroke-width="1"/><path d="M1013.3 958V977" stroke="#5a5a5a" stroke-width="1"/><path d="M1055.2 958V977" stroke="#5a5a5a" stroke-width="1"/><path d="M1097.1 958V977" stroke="#5a5a5a" stroke-width="1"/><path d="M1139.0 958V977" stroke="#5a5a5a" stroke-width="1"/><path d="M1180.9 958V977" stroke="#5a5a5a" stroke-width="1"/><path d="M1222.8 958V977" stroke="#5a5a5a" stroke-width="1"/><path d="M1264.7 958V977" stroke="#5a5a5a" stroke-width="1"/><path d="M1306.6 958V977" stroke="#5a5a5a" stroke-width="1"/><path d="M1348.5 958V977" stroke="#5a5a5a" stroke-width="1"/><path d="M1390.4 958V977" stroke="#3c3c3c" stroke-width="1"/><path d="M1432.3 958V977" stroke="#3c3c3c" stroke-width="1"/><path d="M1474.2 958V977" stroke="#3c3c3c" stroke-width="1"/><path d="M1516.1 958V977" stroke="#3c3c3c" stroke-width="1"/></svg>
<div class="a" style="left:299px;top:958px;width:4px;height:19px;background:#161616;"></div>
<div class="a" style="left:1346px;top:958px;width:4px;height:19px;background:#161616;"></div>
<div class="a" style="left:0px;top:958px;width:1547px;height:1px;background:#444444;"></div>
<div class="a" style="left:371px;top:958px;width:3px;height:19px;background:#5ac83c;"></div>
<div class="a" style="left:0px;top:977px;width:1547px;height:22px;background:#464646;"></div>
<div class="a" style="left:4px;top:977px;width:1539px;height:16px;border-radius:8px;background:linear-gradient(#3c3c3c,#4e4e4e);box-shadow:inset 0 0 0 1px #333,0 1px 0 #555"></div>
<div class="a" style="left:5px;top:980px;width:10px;height:10px;border-radius:5px;background:#262626"></div>
<div class="a" style="left:1530px;top:980px;width:10px;height:10px;border-radius:5px;background:#262626"></div>
<div class="t" style="left:23.5px;width:60px;text-align:center;top:977.85px;font-size:14px;color:#d0d0d0">-60</div>
<div class="t" style="left:106.8px;width:60px;text-align:center;top:977.85px;font-size:14px;color:#d0d0d0">-40</div>
<div class="t" style="left:190.2px;width:60px;text-align:center;top:977.85px;font-size:14px;color:#d0d0d0">-20</div>
<div class="t" style="left:273.5px;width:60px;text-align:center;top:977.85px;font-size:14px;color:#d0d0d0">0</div>
<div class="t" style="left:356.8px;width:60px;text-align:center;top:977.85px;font-size:14px;color:#d0d0d0">20</div>
<div class="t" style="left:440.2px;width:60px;text-align:center;top:977.85px;font-size:14px;color:#d0d0d0">40</div>
<div class="t" style="left:523.5px;width:60px;text-align:center;top:977.85px;font-size:14px;color:#d0d0d0">60</div>
<div class="t" style="left:606.9px;width:60px;text-align:center;top:977.85px;font-size:14px;color:#d0d0d0">80</div>
<div class="t" style="left:690.2px;width:60px;text-align:center;top:977.85px;font-size:14px;color:#d0d0d0">100</div>
<div class="t" style="left:773.5px;width:60px;text-align:center;top:977.85px;font-size:14px;color:#d0d0d0">120</div>
<div class="t" style="left:856.9px;width:60px;text-align:center;top:977.85px;font-size:14px;color:#d0d0d0">140</div>
<div class="t" style="left:940.2px;width:60px;text-align:center;top:977.85px;font-size:14px;color:#d0d0d0">160</div>
<div class="t" style="left:1023.6px;width:60px;text-align:center;top:977.85px;font-size:14px;color:#d0d0d0">180</div>
<div class="t" style="left:1106.9px;width:60px;text-align:center;top:977.85px;font-size:14px;color:#d0d0d0">200</div>
<div class="t" style="left:1190.2px;width:60px;text-align:center;top:977.85px;font-size:14px;color:#d0d0d0">220</div>
<div class="t" style="left:1273.6px;width:60px;text-align:center;top:977.85px;font-size:14px;color:#d0d0d0">240</div>
<div class="t" style="left:1356.9px;width:60px;text-align:center;top:977.85px;font-size:14px;color:#d0d0d0">260</div>
<div class="t" style="left:1440.3px;width:60px;text-align:center;top:977.85px;font-size:14px;color:#d0d0d0">280</div>
<svg class="a" style="left:1530px;top:958px;" width="17" height="17" viewBox="0 0 17 17"><path d="M2 1L16 15M6 1L16 11M10 1L16 7" stroke="#c8c8c8" stroke-width="1"/><path d="M3 1L16 14M7 1L16 10M11 1L16 6" stroke="#111" stroke-width="1"/></svg>
<div class="a" style="left:0px;top:998px;width:1547px;height:20px;background:#323232;"></div>
<div class="t" style="left:17px;top:1009.15px;font-size:14px;color:#c0c0c0;letter-spacing:0.2px">Marker</div>
<div class="t" style="left:88.5px;top:1009.15px;font-size:14px;color:#c0c0c0;letter-spacing:0.2px">Frame</div>
<div class="t" style="left:154px;top:1009.15px;font-size:14px;color:#c0c0c0;letter-spacing:0.2px">Playback</div>
<div class="a" style="left:229px;top:1002px;width:48px;height:24px;background:#3a3a3a;border-radius:5px;box-shadow:inset 0 0 0 1px #262626,0 1px 0 rgba(255,255,255,0.04);"></div>
<div class="a" style="left:253px;top:1003px;width:1px;height:22px;background:#2a2a2a;"></div>
<svg class="a" style="left:232px;top:1005px;" width="18" height="18" viewBox="0 0 18 18"><circle cx="9" cy="9" r="7.5" fill="#eee" stroke="#111"/><path d="M9 9V1.5A7.5 7.5 0 0 1 16.5 9Z" fill="#f0a020"/><path d="M9 9L5 15" stroke="#d03030" stroke-width="1.5"/></svg>
<svg class="a" style="left:257px;top:1004px;" width="18" height="18" viewBox="0 0 18 18"><path d="M5 9V6C5 2 13 2 13 6V9" stroke="#eee" stroke-width="2" fill="none"/><rect x="3" y="9" width="12" height="9" fill="#eee" stroke="#111"/></svg>
<div class="a" style="left:285px;top:1002px;width:284px;height:24px;background:#3a3a3a;border-radius:8px;box-shadow:inset 0 0 0 1px #262626,0 1px 0 rgba(255,255,255,0.04);"></div>
<div class="a" style="left:430px;top:1003px;width:1px;height:22px;background:#2a2a2a;"></div>
<svg class="a" style="left:289px;top:1007px;" width="6" height="10" viewBox="0 0 6 10"><path d="M5 1L1 5L5 9" fill="#555"/></svg>
<svg class="a" style="left:420px;top:1007px;" width="6" height="10" viewBox="0 0 6 10"><path d="M1 1L5 5L1 9" fill="#555"/></svg>
<div class="t" style="left:298px;top:1009.15px;font-size:14px;color:#b8b8b8;">Start:</div>
<div class="t" style="left:285px;width:131px;text-align:right;top:1009.15px;font-size:14px;color:#b8b8b8">1</div>
<svg class="a" style="left:434px;top:1007px;" width="6" height="10" viewBox="0 0 6 10"><path d="M5 1L1 5L5 9" fill="#555"/></svg>
<svg class="a" style="left:559px;top:1007px;" width="6" height="10" viewBox="0 0 6 10"><path d="M1 1L5 5L1 9" fill="#555"/></svg>
<div class="t" style="left:443px;top:1009.15px;font-size:14px;color:#b8b8b8;">End:</div>
<div class="t" style="left:430px;width:125px;text-align:right;top:1009.15px;font-size:14px;color:#b8b8b8">250</div>
<div class="a" style="left:580px;top:1002px;width:107px;height:24px;background:#3a3a3a;border-radius:8px;box-shadow:inset 0 0 0 1px #262626,0 1px 0 rgba(255,255,255,0.04);"></div>
<svg class="a" style="left:584px;top:1007px;" width="6" height="10" viewBox="0 0 6 10"><path d="M5 1L1 5L5 9" fill="#555"/></svg>
<svg class="a" style="left:677px;top:1007px;" width="6" height="10" viewBox="0 0 6 10"><path d="M1 1L5 5L1 9" fill="#555"/></svg>
<div class="t" style="left:580px;width:93px;text-align:right;top:1009.15px;font-size:14px;color:#b8b8b8">17</div>
<div class="a" style="left:706px;top:1002px;width:153px;height:24px;background:#3a3a3a;border-radius:5px;box-shadow:inset 0 0 0 1px #262626,0 1px 0 rgba(255,255,255,0.04);"></div>
<svg class="a" style="left:710px;top:1003px;" width="18" height="18" viewBox="0 0 18 18"><path d="M2 2V16 M3 9L9 2V16Z M9 9L15 2V16Z" stroke="#111" stroke-width="1.2" fill="#f0f0f0" stroke-linejoin="round"/></svg>
<div class="a" style="left:731px;top:1003px;width:1px;height:22px;background:#2a2a2a;"></div>
<svg class="a" style="left:735px;top:1003px;" width="18" height="18" viewBox="0 0 18 18"><path d="M2 9L8 2V16Z M8 9L14 2V16Z" stroke="#111" stroke-width="1.2" fill="#f0f0f0" stroke-linejoin="round"/></svg>
<div class="a" style="left:757px;top:1003px;width:1px;height:22px;background:#2a2a2a;"></div>
<svg class="a" style="left:761px;top:1003px;" width="18" height="18" viewBox="0 0 18 18"><path d="M3 9L14 1V17Z" stroke="#111" stroke-width="1.2" fill="#f0f0f0" stroke-linejoin="round"/></svg>
<div class="a" style="left:782px;top:1003px;width:1px;height:22px;background:#2a2a2a;"></div>
<svg class="a" style="left:786px;top:1003px;" width="18" height="18" viewBox="0 0 18 18"><path d="M4 1L15 9L4 17Z" stroke="#111" stroke-width="1.2" fill="#f0f0f0" stroke-linejoin="round"/></svg>
<div class="a" style="left:808px;top:1003px;width:1px;height:22px;background:#2a2a2a;"></div>
<svg class="a" style="left:812px;top:1003px;" width="18" height="18" viewBox="0 0 18 18"><path d="M2 2V16L8 9Z M8 2V16L14 9Z" stroke="#111" stroke-width="1.2" fill="#f0f0f0" stroke-linejoin="round"/></svg>
<div class="a" style="left:833px;top:1003px;width:1px;height:22px;background:#2a2a2a;"></div>
<svg class="a" style="left:837px;top:1003px;" width="18" height="18" viewBox="0 0 18 18"><path d="M1 2V16L7 9Z M7 2V16L13 9Z M14 2V16" stroke="#111" stroke-width="1.2" fill="#f0f0f0" stroke-linejoin="round"/></svg>
<div class="a" style="left:865px;top:1002px;width:144px;height:24px;background:#3a3a3a;border-radius:5px;box-shadow:inset 0 0 0 1px #262626,0 1px 0 rgba(255,255,255,0.04);"></div>
<div class="t" style="left:874px;top:1009.15px;font-size:14px;color:#b0b0b0;">No Sync</div>
<svg class="a" style="left:998px;top:1006px;" width="8" height="16" viewBox="0 0 8 16"><path d="M0.5 6.5 L4 1 L7.5 6.5Z M0.5 9.5 L4 15 L7.5 9.5Z" fill="#5a5a5a"/></svg>
<div class="a" style="left:1029px;top:1002px;width:24px;height:24px;background:#3a3a3a;border-radius:5px;box-shadow:inset 0 0 0 1px #262626,0 1px 0 rgba(255,255,255,0.04);"></div>
<svg class="a" style="left:1034px;top:1007px;" width="14" height="14" viewBox="0 0 14 14"><circle cx="7" cy="7" r="6" fill="#e03018" stroke="#222" stroke-width="1"/></svg>
<div class="a" style="left:1061px;top:1002px;width:37px;height:24px;background:#3a3a3a;border-radius:5px;box-shadow:inset 0 0 0 1px #262626,0 1px 0 rgba(255,255,255,0.04);"></div>
<svg class="a" style="left:1066px;top:1005px;" width="14" height="14" viewBox="0 0 14 14"><path d="M7 1L13 7L7 13L1 7Z" fill="#f0a010" stroke="#222"/></svg>
<svg class="a" style="left:1086px;top:1006px;" width="8" height="16" viewBox="0 0 8 16"><path d="M0.5 6.5 L4 1 L7.5 6.5Z M0.5 9.5 L4 15 L7.5 9.5Z" fill="#5a5a5a"/></svg>
<div class="a" style="left:1107px;top:1002px;width:216px;height:24px;background:#3a3a3a;border-radius:5px;box-shadow:inset 0 0 0 1px #262626,0 1px 0 rgba(255,255,255,0.04);"></div>
<div class="a" style="left:1107px;top:1002px;width:167px;height:24px;background:#7d838a;border-radius:5px 0 0 5px"></div>
<div class="a" style="left:1298px;top:1003px;width:1px;height:22px;background:#2a2a2a;"></div>
<svg class="a" style="left:1112px;top:1004px;" width="24" height="20" viewBox="0 0 24 20"><path d="M5 2V18M5 6H8M5 11H8" stroke="#111" stroke-width="3"/><path d="M5 2V18M5 6H8M5 11H8" stroke="#e8d070" stroke-width="1.4"/><path d="M10 16L20 8" stroke="#eee" stroke-width="2.5"/></svg>
<svg class="a" style="left:1280px;top:1004px;" width="18" height="18" viewBox="0 0 18 18"><path d="M3 16L15 5" stroke="#111" stroke-width="3.5"/><path d="M3 16L15 5" stroke="#eee" stroke-width="2"/></svg>
<svg class="a" style="left:1304px;top:1004px;" width="18" height="18" viewBox="0 0 18 18"><path d="M3 16L15 5" stroke="#eee" stroke-width="2"/><path d="M3 3L15 16" stroke="#e02020" stroke-width="1.6"/></svg>
<div class="a" style="left:1332px;top:1002px;width:110px;height:24px;background:#3a3a3a;border-radius:5px;box-shadow:inset 0 0 0 1px #262626,0 1px 0 rgba(255,255,255,0.04);"></div>
<svg class="a" style="left:1337px;top:1004px;" width="20" height="20" viewBox="0 0 20 20"><path d="M4 3H14V8H4Z" fill="#ddd" stroke="#111"/><path d="M3 6H15" stroke="#3a80f0" stroke-width="2"/><rect x="5" y="11" width="8" height="7" fill="#eee" stroke="#111"/></svg>
<div class="t" style="left:1362px;top:1009.15px;font-size:14px;color:#b8b8b8;">Jog/Shuttle</div>
<div class="a" style="left:1548px;top:62px;width:365px;height:32px;background:#323232;"></div>
<div class="a" style="left:1548px;top:94px;width:365px;height:1px;background:#4a4a4a;"></div>
<div class="a" style="left:1560px;top:67px;width:38px;height:24px;background:#3a3a3a;border-radius:5px;box-shadow:inset 0 0 0 1px #262626,0 1px 0 rgba(255,255,255,0.04);"></div>
<svg class="a" style="left:1563px;top:69px;" width="24" height="20" viewBox="0 0 24 20"><rect x="2" y="2" width="8" height="3" fill="#f0a030" stroke="#222" stroke-width="0.6"/><path d="M5 5V16H10M5 11H10" stroke="#8ab0e0" stroke-width="1" fill="none"/><rect x="10" y="9.5" width="7" height="3" fill="#eee" stroke="#222" stroke-width="0.6"/><rect x="10" y="14.5" width="7" height="3" fill="#eee" stroke="#222" stroke-width="0.6"/></svg>
<svg class="a" style="left:1587px;top:71px;" width="8" height="16" viewBox="0 0 8 16"><path d="M0.5 6.5 L4 1 L7.5 6.5Z M0.5 9.5 L4 15 L7.5 9.5Z" fill="#5a5a5a"/></svg>
<div class="t" style="left:1614px;top:73.15px;font-size:14px;color:#c0c0c0;">View</div>
<div class="t" style="left:1670.5px;top:73.15px;font-size:14px;color:#c0c0c0;">Search</div>
<div class="a" style="left:1731px;top:67px;width:151px;height:24px;background:#3a3a3a;border-radius:5px;box-shadow:inset 0 0 0 1px #262626,0 1px 0 rgba(255,255,255,0.04);"></div>
<div class="t" style="left:1740px;top:73.15px;font-size:14px;color:#b8b8b8;">All Scenes</div>
<svg class="a" style="left:1871px;top:71px;" width="8" height="16" viewBox="0 0 8 16"><path d="M0.5 6.5 L4 1 L7.5 6.5Z M0.5 9.5 L4 15 L7.5 9.5Z" fill="#5a5a5a"/></svg>
<div class="a" style="left:1890px;top:67px;width:30px;height:24px;border-radius:5px;background:#6a6e72;box-shadow:inset 0 0 0 1px #262626"></div>
<svg class="a" style="left:1891px;top:67px;" width="24" height="24" viewBox="0 0 24 24"><circle cx="15" cy="9" r="5.5" fill="#cde" stroke="#222" stroke-width="1.4"/><path d="M11 13L4 20" stroke="#222" stroke-width="3.5"/><path d="M11 13L4 20" stroke="#d07020" stroke-width="2"/></svg>
<svg class="a" style="left:1898px;top:63px;" width="15" height="15" viewBox="0 0 15 15"><path d="M3 1L15 13M7 1L15 9M11 1L15 5" stroke="#c8c8c8" stroke-width="1"/><path d="M4 1L15 12M8 1L15 8M12 1L15 4" stroke="#111" stroke-width="1"/></svg>
<div class="a" style="left:1548px;top:95px;width:365px;height:130px;background:#3e3e3e;"></div>
<div class="a" style="left:1548px;top:119px;width:349px;height:25px;background:#444444;"></div>
<div class="a" style="left:1548px;top:169px;width:349px;height:25px;background:#444444;"></div>
<div class="a" style="left:1548px;top:95px;width:274px;height:24px;background:#818589;"></div>
<div class="a" style="left:1822px;top:95px;width:75px;height:24px;background:#434343;"></div>
<div class="a" style="left:1822px;top:95px;width:1px;height:115px;background:#333;"></div>
<div class="a" style="left:1847px;top:95px;width:1px;height:115px;background:#333;"></div>
<div class="a" style="left:1872px;top:95px;width:1px;height:115px;background:#333;"></div>
<div class="a" style="left:1585px;top:119px;width:1px;height:90px;background:#7a7a7a;"></div>
<div class="a" style="left:1591px;top:183px;width:14px;height:1px;background:#6a6a6a;"></div>
<svg class="a" style="left:1555px;top:102px;" width="12" height="12" viewBox="0 0 12 12"><circle cx="6" cy="6" r="5" fill="#eee" stroke="#111" stroke-width="1.4"/><path d="M3 6H9" stroke="#111" stroke-width="1.8"/></svg>
<svg class="a" style="left:1580px;top:127px;" width="12" height="12" viewBox="0 0 12 12"><circle cx="6" cy="6" r="5" fill="#eee" stroke="#111" stroke-width="1.4"/><path d="M3 6H9" stroke="#111" stroke-width="1.8"/><path d="M6 3V9" stroke="#111" stroke-width="1.8"/></svg>
<svg class="a" style="left:1580px;top:177px;" width="12" height="12" viewBox="0 0 12 12"><circle cx="6" cy="6" r="5" fill="#eee" stroke="#111" stroke-width="1.4"/><path d="M3 6H9" stroke="#111" stroke-width="1.8"/><path d="M6 3V9" stroke="#111" stroke-width="1.8"/></svg>
<svg class="a" style="left:1575px;top:96px;" width="23" height="23" viewBox="0 0 23 23"><circle cx="11.5" cy="11.5" r="11" fill="#a5a9ad"/><circle cx="6" cy="5" r="2.3" fill="#d0d860" stroke="#776" stroke-width=".5"/><rect x="11" y="2.5" width="7" height="12" rx="3" fill="#3f78c8" stroke="#111" stroke-width="1"/><circle cx="8" cy="15" r="4.5" fill="#ddd" stroke="#111" stroke-width="1"/></svg>
<div class="t" style="left:1601.5px;top:102.15px;font-size:14px;color:#d4d4d4;letter-spacing:0.3px">Scene</div>
<svg class="a" style="left:1601px;top:121px;" width="20" height="20" viewBox="0 0 20 20"><rect x="5" y="5" width="12" height="13" fill="#d8d0b0" stroke="#111" stroke-width="1"/><rect x="2" y="2" width="12" height="12" fill="#dde" stroke="#111" stroke-width="1"/><rect x="7" y="4" width="4" height="7" fill="#3f78c8"/><circle cx="6" cy="11" r="2.5" fill="#ddd" stroke="#222" stroke-width=".6"/></svg>
<div class="t" style="left:1626.5px;top:127.15px;font-size:14px;color:#d0d0d0;">RenderLayers</div>
<div class="a" style="left:1727px;top:127px;width:3px;height:14px;background:#111;"></div>
<svg class="a" style="left:1741px;top:122px;" width="22" height="22" viewBox="0 0 22 22"><circle cx="11" cy="11" r="11" fill="#5a5a5a"/><rect x="7" y="7" width="12" height="13" fill="#d8d0b0" stroke="#111" stroke-width="1"/><rect x="4" y="4" width="12" height="12" fill="#dde" stroke="#111" stroke-width="1"/><rect x="9" y="6" width="4" height="7" fill="#3f78c8"/><circle cx="8" cy="13" r="2.5" fill="#ddd" stroke="#222" stroke-width=".6"/></svg>
<svg class="a" style="left:1601px;top:146px;" width="22" height="22" viewBox="0 0 22 22"><circle cx="11" cy="11" r="11" fill="#7a7c90"/><circle cx="11" cy="11" r="8" fill="#3a70c0" stroke="#111"/><path d="M6 8C8 6 10 9 8 12C7 14 9 16 10 17M12 5C14 7 16 7 17 10C15 12 13 11 13 14" stroke="#4a9a40" stroke-width="2.5" fill="none"/></svg>
<div class="t" style="left:1626.5px;top:152.15px;font-size:14px;color:#d0d0d0;letter-spacing:0.3px">World</div>
<svg class="a" style="left:1602px;top:173px;" width="21" height="20" viewBox="0 0 21 20"><circle cx="6" cy="5" r="4" fill="#f0a030" stroke="#422" stroke-width="1"/><circle cx="13" cy="5" r="4" fill="#f0a030" stroke="#422" stroke-width="1"/><rect x="4" y="9" width="10" height="7" fill="#f0a030" stroke="#422" stroke-width="1"/><path d="M14 11L19 9V16L14 14Z" fill="#f0a030" stroke="#422" stroke-width="1"/></svg>
<div class="t" style="left:1626.5px;top:177.15px;font-size:14px;color:#d0d0d0;letter-spacing:0.2px">Camera</div>
<div class="a" style="left:1688px;top:177px;width:3px;height:14px;background:#111;"></div>
<svg class="a" style="left:1703px;top:172px;" width="23" height="23" viewBox="0 0 23 23"><circle cx="11.5" cy="11.5" r="11.5" fill="#6a6a6a"/><g opacity="0.55"><circle cx="6" cy="5" r="4" fill="#999" stroke="#422" stroke-width="1"/><circle cx="13" cy="5" r="4" fill="#999" stroke="#422" stroke-width="1"/><rect x="4" y="9" width="10" height="7" fill="#999" stroke="#422" stroke-width="1"/><path d="M14 11L19 9V16L14 14Z" fill="#999" stroke="#422" stroke-width="1"/></g></svg>
<svg class="a" style="left:1826px;top:177px;" width="18" height="12" viewBox="0 0 18 12"><path d="M1 6C5 0 13 0 17 6C13 12 5 12 1 6Z" fill="#eee" stroke="#111" stroke-width="1"/><circle cx="9" cy="6" r="2.8" fill="#555"/></svg>
<svg class="a" style="left:1855px;top:174px;" width="14" height="17" viewBox="0 0 14 17"><path d="M2 1L2 14L5.5 11L8.5 16L10.5 15L7.5 10L12 10Z" fill="#eee" stroke="#111" stroke-width="1"/></svg>
<svg class="a" style="left:1876px;top:175px;" width="17" height="15" viewBox="0 0 17 15"><rect x="1" y="3" width="15" height="11" fill="#ddd" stroke="#111"/><circle cx="8.5" cy="8.5" r="3.5" fill="#556" stroke="#111"/><circle cx="8.5" cy="8.5" r="1.8" fill="#c44"/><rect x="2" y="1" width="4" height="2" fill="#ddd" stroke="#111" stroke-width=".6"/></svg>
<div class="a" style="left:1548px;top:194px;width:349px;height:11px;overflow:hidden"><svg class="a" style="left:53px;top:2px" width="22" height="20"><circle cx="11" cy="10" r="9.5" fill="#e08020" stroke="#533" stroke-width="1"/><rect x="4" y="7" width="14" height="4" fill="#fff" stroke="#422" stroke-width=".6"/></svg><div class="t" style="left:80px;top:6px;font-size:14px;color:#b0b0b0">Armature</div><div class="a" style="left:119px;top:5px;width:3px;height:8px;background:#111"></div><svg class="a" style="left:137px;top:5px" width="18" height="8"><rect x="1" y="1" width="4" height="4" fill="#ddd" stroke="#111" stroke-width=".6"/><rect x="5" y="2" width="8" height="2" fill="#ddd"/><rect x="13" y="1" width="4" height="4" fill="#ddd" stroke="#111" stroke-width=".6"/></svg><svg class="a" style="left:169px;top:3px" width="12" height="10"><path d="M8 1C3 2 2 8 6 10" stroke="#9ab0f0" stroke-width="2" fill="none"/></svg><svg class="a" style="left:188px;top:3px" width="18" height="10"><rect x="0" y="5" width="3" height="3" fill="#eee" stroke="#111" stroke-width=".5"/><rect x="7" y="1" width="3" height="3" fill="#eee" stroke="#111" stroke-width=".5"/><rect x="13" y="5" width="3" height="3" fill="#eee" stroke="#111" stroke-width=".5"/></svg><svg class="a" style="left:282px;top:6px" width="14" height="8"><path d="M1 6C4 0 10 0 13 6" fill="#ddd" stroke="#111"/></svg><svg class="a" style="left:309px;top:4px" width="10" height="8"><path d="M1 1L1 8L6 6Z" fill="#eee" stroke="#111" stroke-width=".8"/></svg><svg class="a" style="left:329px;top:6px" width="16" height="8"><rect x="1" y="2" width="14" height="6" fill="#ddd" stroke="#111" stroke-width=".8"/></svg></div>
<div class="a" style="left:1548px;top:204px;width:365px;height:21px;background:#3e3e3e;"></div>
<div class="a" style="left:1554px;top:205px;width:335px;height:15px;border-radius:8px;background:linear-gradient(#3a3a3a,#474747);box-shadow:inset 0 0 0 1px #2e2e2e,0 1px 0 #555"></div>
<div class="a" style="left:1897px;top:95px;width:16px;height:109px;background:#3e3e3e;"></div>
<div class="a" style="left:1898px;top:100px;width:16px;height:98px;border-radius:8px;background:#3a3a3a;box-shadow:inset 0 0 0 1px #333"></div>
<div class="a" style="left:1899px;top:101px;width:14px;height:60px;border-radius:7px;background:linear-gradient(90deg,#444,#4e4e4e);box-shadow:inset 0 0 0 1px #353535"></div>
<svg class="a" style="left:1549px;top:206px;" width="17" height="17" viewBox="0 0 17 17"><path d="M1 3L14 16M1 7L10 16M1 11L6 16" stroke="#c8c8c8" stroke-width="1"/><path d="M1 2L15 16M1 6L11 16M1 10L7 16" stroke="#111" stroke-width="1"/></svg>
<div class="a" style="left:1548px;top:225px;width:365px;height:1px;background:#0e0e0e;"></div>
<div class="a" style="left:1548px;top:226px;width:365px;height:32px;background:#323232;"></div>
<div class="a" style="left:1548px;top:258px;width:365px;height:760px;background:#3d3d3d;"></div>
<div class="a" style="left:1560px;top:231px;width:38px;height:24px;background:#3a3a3a;border-radius:5px;box-shadow:inset 0 0 0 1px #262626,0 1px 0 rgba(255,255,255,0.04);"></div>
<svg class="a" style="left:1563px;top:234px;" width="20" height="18" viewBox="0 0 20 18"><rect x="1.5" y="1.5" width="14" height="6" rx="3" fill="#ddd" stroke="#111"/><rect x="1.5" y="1.5" width="7" height="6" rx="3" fill="#555"/><rect x="1.5" y="10.5" width="14" height="6" rx="3" fill="#eee" stroke="#111"/><path d="M4 13.5L6 12V15Z M13 13.5L11 12V15Z" fill="#111"/></svg>
<svg class="a" style="left:1587px;top:235px;" width="8" height="16" viewBox="0 0 8 16"><path d="M0.5 6.5 L4 1 L7.5 6.5Z M0.5 9.5 L4 15 L7.5 9.5Z" fill="#5a5a5a"/></svg>
<div class="a" style="left:1609px;top:231px;width:274px;height:24px;background:#3a3a3a;border-radius:5px;box-shadow:inset 0 0 0 1px #262626,0 1px 0 rgba(255,255,255,0.04);"></div>
<div class="a" style="left:1784px;top:231px;width:25px;height:24px;background:#c4853f"></div>
<div class="a" style="left:1633px;top:232px;width:1px;height:22px;background:#2a2a2a;"></div>
<div class="a" style="left:1658px;top:232px;width:1px;height:22px;background:#2a2a2a;"></div>
<div class="a" style="left:1683px;top:232px;width:1px;height:22px;background:#2a2a2a;"></div>
<div class="a" style="left:1708px;top:232px;width:1px;height:22px;background:#2a2a2a;"></div>
<div class="a" style="left:1733px;top:232px;width:1px;height:22px;background:#2a2a2a;"></div>
<div class="a" style="left:1757px;top:232px;width:1px;height:22px;background:#2a2a2a;"></div>
<div class="a" style="left:1782px;top:232px;width:1px;height:22px;background:#2a2a2a;"></div>
<div class="a" style="left:1807px;top:232px;width:1px;height:22px;background:#2a2a2a;"></div>
<div class="a" style="left:1832px;top:232px;width:1px;height:22px;background:#2a2a2a;"></div>
<div class="a" style="left:1857px;top:232px;width:1px;height:22px;background:#2a2a2a;"></div>
<svg class="a" style="left:1612px;top:233px;" width="20" height="20" viewBox="0 0 20 20"><rect x="2" y="5" width="16" height="11" fill="#ccc" stroke="#111"/><circle cx="10" cy="10.5" r="4" fill="#445" stroke="#111"/><circle cx="10" cy="10.5" r="1.8" fill="#a33"/><rect x="3" y="3" width="4" height="2" fill="#ccc" stroke="#111" stroke-width=".6"/></svg>
<svg class="a" style="left:1636px;top:233px;" width="20" height="20" viewBox="0 0 20 20"><rect x="5" y="5" width="12" height="12" fill="#d8d0b0" stroke="#111"/><rect x="2" y="2" width="12" height="12" fill="#dde" stroke="#111"/><rect x="7" y="4" width="4" height="7" fill="#3f78c8"/><circle cx="6" cy="11" r="2.5" fill="#ddd" stroke="#222" stroke-width=".6"/></svg>
<svg class="a" style="left:1661px;top:233px;" width="20" height="20" viewBox="0 0 20 20"><circle cx="5" cy="4" r="2.5" fill="#d0d860"/><rect x="10" y="4" width="7" height="11" rx="3" fill="#3f70b0" stroke="#111"/><circle cx="8" cy="14" r="4.5" fill="#bbb" stroke="#111"/></svg>
<svg class="a" style="left:1686px;top:233px;" width="20" height="20" viewBox="0 0 20 20"><circle cx="10" cy="10" r="8" fill="#3a70c0" stroke="#111"/><path d="M5 7C7 5 9 8 7 11C6 13 8 15 9 16M11 4C13 6 15 6 16 9C14 11 12 10 12 13" stroke="#4a9a40" stroke-width="2.5" fill="none"/></svg>
<svg class="a" style="left:1711px;top:233px;" width="20" height="20" viewBox="0 0 20 20"><path d="M10 2L17 5.5V14L10 18L3 14V5.5Z" fill="#c8955a" stroke="#222" stroke-linejoin="round"/><path d="M3 5.5L10 9L17 5.5L10 2Z" fill="#e8c090"/><path d="M10 9L17 5.5V14L10 18Z" fill="#a87040"/></svg>
<svg class="a" style="left:1736px;top:233px;" width="20" height="20" viewBox="0 0 20 20"><path d="M8 12L12 8" stroke="#ccc" stroke-width="2"/><rect x="1.5" y="9" width="9" height="6" rx="3" transform="rotate(-45 6 12)" fill="none" stroke="#ccc" stroke-width="2"/><rect x="9.5" y="5" width="9" height="6" rx="3" transform="rotate(-45 14 8)" fill="none" stroke="#ccc" stroke-width="2"/></svg>
<svg class="a" style="left:1760px;top:233px;" width="20" height="20" viewBox="0 0 20 20"><circle cx="10" cy="3" r="2" fill="#ccc"/><path d="M10 5V12M3 8H17M10 12L5 18M10 12L15 18" stroke="#ccc" stroke-width="2" fill="none"/></svg>
<svg class="a" style="left:1785px;top:233px;" width="20" height="20" viewBox="0 0 20 20"><path d="M5 15L15 5" stroke="#111" stroke-width="5"/><circle cx="4" cy="13" r="2.6" fill="#fff" stroke="#111"/><circle cx="7" cy="16" r="2.6" fill="#fff" stroke="#111"/><circle cx="13" cy="4" r="2.6" fill="#fff" stroke="#111"/><circle cx="16" cy="7" r="2.6" fill="#fff" stroke="#111"/><path d="M5 15L15 5" stroke="#fff" stroke-width="3"/></svg>
<svg class="a" style="left:1810px;top:233px;" width="20" height="20" viewBox="0 0 20 20"><path d="M3 9L9 3" stroke="#bbb" stroke-width="2.5"/><path d="M9 14C7 12 9 9 12 11C15 13 13 17 11 16" stroke="#bbb" stroke-width="2" fill="none"/><path d="M12 11C14 9 17 10 17 12" stroke="#bbb" stroke-width="2" fill="none"/></svg>
<svg class="a" style="left:1835px;top:233px;" width="20" height="20" viewBox="0 0 20 20"><rect x="2" y="2" width="16" height="16" fill="#ddd" stroke="#555" stroke-width=".8"/><path d="M2 2h4v4h-4zM10 2h4v4h-4zM6 6h4v4h-4zM14 6h4v4h-4zM2 10h4v4h-4zM10 10h4v4h-4zM6 14h4v4h-4zM14 14h4v4h-4z" fill="#a33"/></svg>
<svg class="a" style="left:1860px;top:233px;" width="20" height="20" viewBox="0 0 20 20"><path d="M2 8L8 15L14 6" stroke="#4a6ab0" stroke-width="3" fill="none"/><circle cx="14" cy="6" r="4" fill="#aaa" stroke="#666"/></svg>
<svg class="a" style="left:1898px;top:227px;" width="15" height="15" viewBox="0 0 15 15"><path d="M3 1L15 13M7 1L15 9M11 1L15 5" stroke="#c8c8c8" stroke-width="1"/><path d="M4 1L15 12M8 1L15 8M12 1L15 4" stroke="#111" stroke-width="1"/></svg>
<div class="a" style="left:1897px;top:258px;width:16px;height:760px;background:#3a3a3a;"></div>
<div class="a" style="left:1897px;top:263px;width:16px;height:760px;border-radius:8px;background:#393939;box-shadow:inset 1px 0 0 #333"></div>
<div class="a" style="left:1898px;top:527px;width:15px;height:500px;border-radius:7px;background:linear-gradient(90deg,#474747,#555)"></div>
<div class="a" style="left:1906px;top:320px;width:10px;height:74px;border-radius:5px;background:#3a4256;box-shadow:inset 0 0 0 1px #22283a"></div>
<svg class="a" style="left:1906px;top:320px;" width="8" height="74" viewBox="0 0 8 74"><rect x="2" y="21.0" width="8" height="1.2" fill="#a8a040"/><rect x="2" y="24.6" width="8" height="1.2" fill="#a8a040"/><rect x="2" y="28.2" width="8" height="1.2" fill="#a8a040"/><rect x="2" y="31.8" width="8" height="1.2" fill="#a8a040"/><rect x="2" y="35.4" width="8" height="1.2" fill="#90a848"/><rect x="2" y="39.0" width="8" height="1.2" fill="#90a848"/><rect x="2" y="42.6" width="8" height="1.2" fill="#90a848"/><rect x="2" y="46.2" width="8" height="1.2" fill="#90a848"/><rect x="2" y="49.8" width="8" height="1.2" fill="#60a070"/><rect x="2" y="53.4" width="8" height="1.2" fill="#60a070"/><rect x="2" y="57.0" width="8" height="1.2" fill="#60a070"/><rect x="2" y="60.6" width="8" height="1.2" fill="#60a070"/><rect x="2" y="64.2" width="8" height="1.2" fill="#40a090"/><rect x="2" y="67.8" width="8" height="1.2" fill="#40a090"/></svg>
<div class="t" style="left:1568px;top:273.15px;font-size:14px;color:#9a9a9a;">In:</div>
<div class="t" style="left:1737px;top:273.15px;font-size:14px;color:#9a9a9a;">Out:</div>
<div class="a" style="left:1559px;top:292px;width:157px;height:24px;border-radius:5px;background:#5e6267;box-shadow:0 1px 0 #2a2a2a"></div>
<div class="a" style="left:1728px;top:292px;width:158px;height:24px;border-radius:5px;background:#5e6267;box-shadow:0 1px 0 #2a2a2a"></div>
<svg class="a" style="left:1563px;top:296px;" width="16" height="16" viewBox="0 0 16 16"><path d="M4 12L12 4" stroke="#111" stroke-width="4"/><circle cx="3.5" cy="10.5" r="2.2" fill="#ddd" stroke="#222" stroke-width=".6"/><circle cx="5.5" cy="12.5" r="2.2" fill="#ddd" stroke="#222" stroke-width=".6"/><circle cx="10.5" cy="3.5" r="2.2" fill="#ddd" stroke="#222" stroke-width=".6"/><circle cx="12.5" cy="5.5" r="2.2" fill="#ddd" stroke="#222" stroke-width=".6"/><path d="M4.5 11.5L11.5 4.5" stroke="#ddd" stroke-width="2.6"/></svg>
<svg class="a" style="left:1732px;top:296px;" width="16" height="16" viewBox="0 0 16 16"><path d="M4 12L12 4" stroke="#111" stroke-width="4"/><circle cx="3.5" cy="10.5" r="2.2" fill="#ddd" stroke="#222" stroke-width=".6"/><circle cx="5.5" cy="12.5" r="2.2" fill="#ddd" stroke="#222" stroke-width=".6"/><circle cx="10.5" cy="3.5" r="2.2" fill="#ddd" stroke="#222" stroke-width=".6"/><circle cx="12.5" cy="5.5" r="2.2" fill="#ddd" stroke="#222" stroke-width=".6"/><path d="M4.5 11.5L11.5 4.5" stroke="#ddd" stroke-width="2.6"/></svg>
<div class="a" style="left:1563px;top:322px;width:16px;height:16px;border-radius:4px;background:#474747;box-shadow:0 1px 0 #2a2a2a"></div>
<div class="t" style="left:1589.5px;top:323.15px;font-size:14px;color:#929292;letter-spacing:0.2px">Relative</div>
<div class="a" style="left:1732px;top:322px;width:16px;height:16px;border-radius:4px;background:#474747;box-shadow:0 1px 0 #2a2a2a"></div>
<div class="t" style="left:1758.5px;top:323.15px;font-size:14px;color:#929292;letter-spacing:0.2px">Relative</div>
<div class="a" style="left:1553px;top:350px;width:340px;height:1px;background:#262626;"></div>
<div class="a" style="left:1553px;top:351px;width:340px;height:1px;background:#444;"></div>
<svg class="a" style="left:1562px;top:360px;" width="11" height="10" viewBox="0 0 11 10"><path d="M0.5 0.5H10.5L5.5 9.5Z" fill="#9a9a9a"/></svg>
<div class="t" style="left:1578.5px;top:357.71px;font-size:15.7px;color:#bdbdbd;">Relations</div>
<svg class="a" style="left:1872px;top:363px" width="15" height="8"><rect x="0" y="0" width="2" height="2" fill="#e8e8e8"/><rect x="0" y="4" width="2" height="2" fill="#e8e8e8"/><rect x="4" y="0" width="2" height="2" fill="#e8e8e8"/><rect x="4" y="4" width="2" height="2" fill="#e8e8e8"/><rect x="8" y="0" width="2" height="2" fill="#e8e8e8"/><rect x="8" y="4" width="2" height="2" fill="#e8e8e8"/><rect x="12" y="0" width="2" height="2" fill="#e8e8e8"/><rect x="12" y="4" width="2" height="2" fill="#e8e8e8"/></svg>
<div class="t" style="left:1568px;top:397.15px;font-size:14px;color:#c4c4c4;letter-spacing:0.2px">Layers:</div>
<div class="t" style="left:1737px;top:397.15px;font-size:14px;color:#c4c4c4;letter-spacing:0.2px">Parent:</div>
<div class="a" style="left:1559px;top:419px;width:75px;height:36px;border-radius:5px;background:#474747;box-shadow:0 1px 0 #2a2a2a"></div>
<svg class="a" style="left:1559px;top:419px;shape-rendering:crispEdges" width="75" height="36" viewBox="0 0 75 36"><rect x="65.625" y="0" width="9.375" height="18.0" rx="2" fill="#d08a3c"/><path d="M9.4 0V36" stroke="#2a2a2a"/><path d="M18.8 0V36" stroke="#2a2a2a"/><path d="M28.1 0V36" stroke="#2a2a2a"/><path d="M37.5 0V36" stroke="#2a2a2a"/><path d="M46.9 0V36" stroke="#2a2a2a"/><path d="M56.2 0V36" stroke="#2a2a2a"/><path d="M65.6 0V36" stroke="#2a2a2a"/><path d="M0 18.0H75" stroke="#2a2a2a"/></svg>
<div class="a" style="left:1641px;top:419px;width:75px;height:36px;border-radius:5px;background:#474747;box-shadow:0 1px 0 #2a2a2a"></div>
<svg class="a" style="left:1641px;top:419px;shape-rendering:crispEdges" width="75" height="36" viewBox="0 0 75 36"><path d="M9.4 0V36" stroke="#2a2a2a"/><path d="M18.8 0V36" stroke="#2a2a2a"/><path d="M28.1 0V36" stroke="#2a2a2a"/><path d="M37.5 0V36" stroke="#2a2a2a"/><path d="M46.9 0V36" stroke="#2a2a2a"/><path d="M56.2 0V36" stroke="#2a2a2a"/><path d="M65.6 0V36" stroke="#2a2a2a"/><path d="M0 18.0H75" stroke="#2a2a2a"/></svg>
<div class="a" style="left:1728px;top:418px;width:158px;height:24px;border-radius:5px;background:#5e6267;box-shadow:0 1px 0 #2a2a2a"></div>
<svg class="a" style="left:1732px;top:422px;" width="16" height="16" viewBox="0 0 16 16"><path d="M4 12L12 4" stroke="#111" stroke-width="4"/><circle cx="3.5" cy="10.5" r="2.2" fill="#ddd" stroke="#222" stroke-width=".6"/><circle cx="5.5" cy="12.5" r="2.2" fill="#ddd" stroke="#222" stroke-width=".6"/><circle cx="10.5" cy="3.5" r="2.2" fill="#ddd" stroke="#222" stroke-width=".6"/><circle cx="12.5" cy="5.5" r="2.2" fill="#ddd" stroke="#222" stroke-width=".6"/><path d="M4.5 11.5L11.5 4.5" stroke="#ddd" stroke-width="2.6"/></svg>
<div class="t" style="left:1757.5px;top:424.15px;font-size:14px;color:#9a9ea2;letter-spacing:0.2px">forearm.R</div>
<div class="a" style="left:1732px;top:451px;width:16px;height:16px;border-radius:4px;background:#8a6a44;box-shadow:0 1px 0 #2a2a2a"></div>
<svg class="a" style="left:1732px;top:448px;" width="18" height="18" viewBox="0 0 18 18"><path d="M3.5 10L7 13.5L15.5 3" stroke="#c8bba8" stroke-width="2.2" fill="none"/></svg>
<div class="t" style="left:1758.5px;top:451.15px;font-size:14px;color:#9a9a9a;letter-spacing:0.2px">Connected</div>
<div class="t" style="left:1568px;top:473.15px;font-size:14px;color:#c4c4c4;letter-spacing:0.2px">Bone Group:</div>
<div class="a" style="left:1732px;top:478px;width:16px;height:16px;border-radius:4px;background:#d08a3c;box-shadow:0 1px 0 #2a2a2a"></div>
<svg class="a" style="left:1732px;top:475px;" width="18" height="18" viewBox="0 0 18 18"><path d="M3.5 10L7 13.5L15.5 3" stroke="#fff" stroke-width="2.2" fill="none"/></svg>
<div class="t" style="left:1758.5px;top:478.15px;font-size:14px;color:#f0f0f0;letter-spacing:0.25px">Inherit Rotation</div>
<div class="a" style="left:1559px;top:494px;width:157px;height:24px;border-radius:5px;background:#7d838a;box-shadow:0 1px 0 #2a2a2a"></div>
<svg class="a" style="left:1562px;top:495px;" width="22" height="22" viewBox="0 0 22 22"><g transform="translate(0,-1)"><path d="M4 12L12 4" stroke="#111" stroke-width="4"/><circle cx="3.5" cy="10.5" r="2.2" fill="#ddd" stroke="#222" stroke-width=".6"/><circle cx="5.5" cy="12.5" r="2.2" fill="#ddd" stroke="#222" stroke-width=".6"/><circle cx="10.5" cy="3.5" r="2.2" fill="#ddd" stroke="#222" stroke-width=".6"/><circle cx="12.5" cy="5.5" r="2.2" fill="#ddd" stroke="#222" stroke-width=".6"/><path d="M4.5 11.5L11.5 4.5" stroke="#ddd" stroke-width="2.6"/></g><g transform="translate(6,7) scale(0.8)"><path d="M4 12L12 4" stroke="#111" stroke-width="4"/><circle cx="3.5" cy="10.5" r="2.2" fill="#ddd" stroke="#222" stroke-width=".6"/><circle cx="5.5" cy="12.5" r="2.2" fill="#ddd" stroke="#222" stroke-width=".6"/><circle cx="10.5" cy="3.5" r="2.2" fill="#ddd" stroke="#222" stroke-width=".6"/><circle cx="12.5" cy="5.5" r="2.2" fill="#ddd" stroke="#222" stroke-width=".6"/><path d="M4.5 11.5L11.5 4.5" stroke="#ddd" stroke-width="2.6"/></g></svg>
<div class="a" style="left:1732px;top:505px;width:16px;height:16px;border-radius:4px;background:#d08a3c;box-shadow:0 1px 0 #2a2a2a"></div>
<svg class="a" style="left:1732px;top:502px;" width="18" height="18" viewBox="0 0 18 18"><path d="M3.5 10L7 13.5L15.5 3" stroke="#fff" stroke-width="2.2" fill="none"/></svg>
<div class="t" style="left:1758.5px;top:505.15px;font-size:14px;color:#f0f0f0;letter-spacing:0.25px">Inherit Scale</div>
<div class="t" style="left:1568px;top:527.15px;font-size:14px;color:#c4c4c4;letter-spacing:0.2px">Object Children:</div>
<div class="a" style="left:1732px;top:532px;width:16px;height:16px;border-radius:4px;background:#8a6a44;box-shadow:0 1px 0 #2a2a2a"></div>
<svg class="a" style="left:1732px;top:529px;" width="18" height="18" viewBox="0 0 18 18"><path d="M3.5 10L7 13.5L15.5 3" stroke="#c8bba8" stroke-width="2.2" fill="none"/></svg>
<div class="t" style="left:1758.5px;top:532.15px;font-size:14px;color:#9a9a9a;letter-spacing:0.2px">Local Location</div>
<div class="a" style="left:1563px;top:552px;width:16px;height:16px;border-radius:4px;background:#474747;box-shadow:0 1px 0 #2a2a2a"></div>
<div class="t" style="left:1589.5px;top:554.15px;font-size:14px;color:#c4c4c4;letter-spacing:0.2px">Relative Parenting</div>
<div class="a" style="left:1553px;top:582px;width:340px;height:1px;background:#262626;"></div>
<div class="a" style="left:1553px;top:583px;width:340px;height:1px;background:#444;"></div>
<svg class="a" style="left:1562px;top:591px;" width="11" height="10" viewBox="0 0 11 10"><path d="M0.5 0.5H10.5L5.5 9.5Z" fill="#9a9a9a"/></svg>
<div class="t" style="left:1578.5px;top:588.71px;font-size:15.7px;color:#bdbdbd;">Display</div>
<svg class="a" style="left:1872px;top:594px" width="15" height="8"><rect x="0" y="0" width="2" height="2" fill="#e8e8e8"/><rect x="0" y="4" width="2" height="2" fill="#e8e8e8"/><rect x="4" y="0" width="2" height="2" fill="#e8e8e8"/><rect x="4" y="4" width="2" height="2" fill="#e8e8e8"/><rect x="8" y="0" width="2" height="2" fill="#e8e8e8"/><rect x="8" y="4" width="2" height="2" fill="#e8e8e8"/><rect x="12" y="0" width="2" height="2" fill="#e8e8e8"/><rect x="12" y="4" width="2" height="2" fill="#e8e8e8"/></svg>
<div class="a" style="left:1563px;top:626px;width:16px;height:16px;border-radius:4px;background:#474747;box-shadow:0 1px 0 #2a2a2a"></div>
<div class="t" style="left:1589.5px;top:628.15px;font-size:14px;color:#c4c4c4;letter-spacing:0.2px">Hide</div>
<div class="t" style="left:1737.5px;top:628.15px;font-size:14px;color:#c4c4c4;letter-spacing:0.2px">Custom Shape:</div>
<div class="a" style="left:1563px;top:653px;width:16px;height:16px;border-radius:4px;background:#474747;box-shadow:0 1px 0 #2a2a2a"></div>
<div class="t" style="left:1589.5px;top:655.15px;font-size:14px;color:#8a8a8a;letter-spacing:0.2px">Wireframe</div>
<div class="a" style="left:1728px;top:649px;width:158px;height:24px;border-radius:5px;background:#7d838a;box-shadow:0 1px 0 #2a2a2a"></div>
<svg class="a" style="left:1733px;top:651px;" width="18" height="18" viewBox="0 0 18 18"><path d="M9 1.5 L16 4.5 V13 L9 16.5 L2 13 V4.5Z" fill="#f0a040" stroke="#3a2a10" stroke-width="1" stroke-linejoin="round"/><path d="M2 4.5 L9 8 L16 4.5 L9 1.5Z" fill="#ffd090"/><path d="M9 8 L16 4.5 V13 L9 16.5Z" fill="#c87a20"/></svg>
<svg class="a" style="left:1865px;top:652px;" width="18" height="18" viewBox="0 0 18 18"><path d="M2 16L10 8" stroke="#111" stroke-width="3"/><path d="M2 16L10 8" stroke="#ddd" stroke-width="1.4"/><path d="M9 5L13 9M11 3C13 1 17 5 15 7L13 9" stroke="#111" stroke-width="3" fill="#111"/></svg>
<div class="a" style="left:1553px;top:683px;width:340px;height:1px;background:#262626;"></div>
<div class="a" style="left:1553px;top:684px;width:340px;height:1px;background:#444;"></div>
<svg class="a" style="left:1563px;top:691px;" width="10" height="12" viewBox="0 0 10 12"><path d="M0.5 0.5V11.5L9.5 6Z" fill="#8a8a8a"/></svg>
<div class="a" style="left:1580px;top:690px;width:16px;height:16px;border-radius:4px;background:#d08a3c;box-shadow:0 1px 0 #2a2a2a"></div>
<svg class="a" style="left:1580px;top:687px;" width="18" height="18" viewBox="0 0 18 18"><path d="M3.5 10L7 13.5L15.5 3" stroke="#fff" stroke-width="2.2" fill="none"/></svg>
<div class="t" style="left:1603.5px;top:690.21px;font-size:15.7px;color:#c4c4c4;">Deform</div>
<svg class="a" style="left:1872px;top:695px" width="15" height="8"><rect x="0" y="0" width="2" height="2" fill="#e8e8e8"/><rect x="0" y="4" width="2" height="2" fill="#e8e8e8"/><rect x="4" y="0" width="2" height="2" fill="#e8e8e8"/><rect x="4" y="4" width="2" height="2" fill="#e8e8e8"/><rect x="8" y="0" width="2" height="2" fill="#e8e8e8"/><rect x="8" y="4" width="2" height="2" fill="#e8e8e8"/><rect x="12" y="0" width="2" height="2" fill="#e8e8e8"/><rect x="12" y="4" width="2" height="2" fill="#e8e8e8"/></svg>
<div class="a" style="left:1553px;top:712px;width:340px;height:1px;background:#262626;"></div>
<div class="a" style="left:1553px;top:713px;width:340px;height:1px;background:#444;"></div>
<svg class="a" style="left:1563px;top:720px;" width="10" height="12" viewBox="0 0 10 12"><path d="M0.5 0.5V11.5L9.5 6Z" fill="#8a8a8a"/></svg>
<div class="t" style="left:1578.5px;top:718.71px;font-size:15.7px;color:#bdbdbd;">Custom Properties</div>
<svg class="a" style="left:1872px;top:724px" width="15" height="8"><rect x="0" y="0" width="2" height="2" fill="#e8e8e8"/><rect x="0" y="4" width="2" height="2" fill="#e8e8e8"/><rect x="4" y="0" width="2" height="2" fill="#e8e8e8"/><rect x="4" y="4" width="2" height="2" fill="#e8e8e8"/><rect x="8" y="0" width="2" height="2" fill="#e8e8e8"/><rect x="8" y="4" width="2" height="2" fill="#e8e8e8"/><rect x="12" y="0" width="2" height="2" fill="#e8e8e8"/><rect x="12" y="4" width="2" height="2" fill="#e8e8e8"/></svg>
<div class="a" style="left:1553px;top:741px;width:340px;height:1px;background:#262626;"></div>
<div class="a" style="left:1553px;top:742px;width:340px;height:1px;background:#444;"></div>
<svg class="a" style="left:1562px;top:750px;" width="11" height="10" viewBox="0 0 11 10"><path d="M0.5 0.5H10.5L5.5 9.5Z" fill="#9a9a9a"/></svg>
<svg class="a" style="left:1578px;top:745px;" width="20" height="20" viewBox="0 0 20 20"><path d="M1 6H7M1 9.5H7" stroke="#e8d070" stroke-width="1.5"/><path d="M6 3H10C14 3 14 12 10 12H6Z" fill="#eee" stroke="#111"/><path d="M14 8C18 10 18 16 12 17H4" stroke="#111" stroke-width="2.4" fill="none"/><path d="M14 8C18 10 18 16 12 17H4" stroke="#eee" stroke-width="1" fill="none"/></svg>
<div class="t" style="left:1603.5px;top:747.21px;font-size:15.7px;color:#bdbdbd;">MS3D - Joint</div>
<svg class="a" style="left:1872px;top:752px" width="15" height="8"><rect x="0" y="0" width="2" height="2" fill="#e8e8e8"/><rect x="0" y="4" width="2" height="2" fill="#e8e8e8"/><rect x="4" y="0" width="2" height="2" fill="#e8e8e8"/><rect x="4" y="4" width="2" height="2" fill="#e8e8e8"/><rect x="8" y="0" width="2" height="2" fill="#e8e8e8"/><rect x="8" y="4" width="2" height="2" fill="#e8e8e8"/><rect x="12" y="0" width="2" height="2" fill="#e8e8e8"/><rect x="12" y="4" width="2" height="2" fill="#e8e8e8"/></svg>
<div class="t" style="left:1568px;top:786.15px;font-size:14px;color:#c4c4c4;letter-spacing:0.2px">Name:</div>
<div class="a" style="left:1674px;top:781px;width:212px;height:24px;border-radius:5px;background:#7d838a;box-shadow:0 1px 0 #2a2a2a"></div>
<div class="a" style="left:1559px;top:812px;width:327px;height:24px;border-radius:5px;background:#3a3a3a;box-shadow:inset 0 0 0 1px #2e2e2e,0 1px 0 #2a2a2a"></div>
<div class="t" style="left:1559.0px;width:46.7px;text-align:center;top:818.15px;font-size:14px;color:#b8b8b8">Select</div>
<div class="a" style="left:1605px;top:813px;width:1px;height:22px;background:#2e2e2e;"></div>
<div class="t" style="left:1605.7px;width:46.7px;text-align:center;top:818.15px;font-size:14px;color:#b8b8b8">Hidden</div>
<div class="a" style="left:1652px;top:813px;width:1px;height:22px;background:#2e2e2e;"></div>
<div class="t" style="left:1652.4px;width:46.7px;text-align:center;top:818.15px;font-size:14px;color:#b8b8b8">Select</div>
<div class="a" style="left:1699px;top:813px;width:1px;height:22px;background:#2e2e2e;"></div>
<div class="t" style="left:1699.1px;width:46.7px;text-align:center;top:818.15px;font-size:14px;color:#b8b8b8">Dirty</div>
<div class="a" style="left:1745px;top:813px;width:1px;height:22px;background:#2e2e2e;"></div>
<div class="t" style="left:1745.8px;width:46.7px;text-align:center;top:818.15px;font-size:14px;color:#b8b8b8">Is Key</div>
<div class="a" style="left:1792px;top:813px;width:1px;height:22px;background:#2e2e2e;"></div>
<div class="t" style="left:1792.5px;width:46.7px;text-align:center;top:818.15px;font-size:14px;color:#b8b8b8">Newly</div>
<div class="a" style="left:1839px;top:813px;width:1px;height:22px;background:#2e2e2e;"></div>
<div class="t" style="left:1839.2px;width:46.7px;text-align:center;top:818.15px;font-size:14px;color:#b8b8b8">Marke</div>
<div class="t" style="left:1568px;top:849.15px;font-size:14px;color:#c4c4c4;letter-spacing:0.2px">Color:</div>
<div class="a" style="left:1723px;top:843px;width:163px;height:23px;border-radius:5px;background:#e6e6e6;box-shadow:0 1px 0 #2a2a2a"></div>
<div class="t" style="left:1568px;top:880.15px;font-size:14px;color:#c4c4c4;letter-spacing:0.2px">Comment:</div>
<div class="a" style="left:1674px;top:874px;width:212px;height:23px;border-radius:5px;background:#7d838a;box-shadow:0 1px 0 #2a2a2a"></div>
</body></html>
